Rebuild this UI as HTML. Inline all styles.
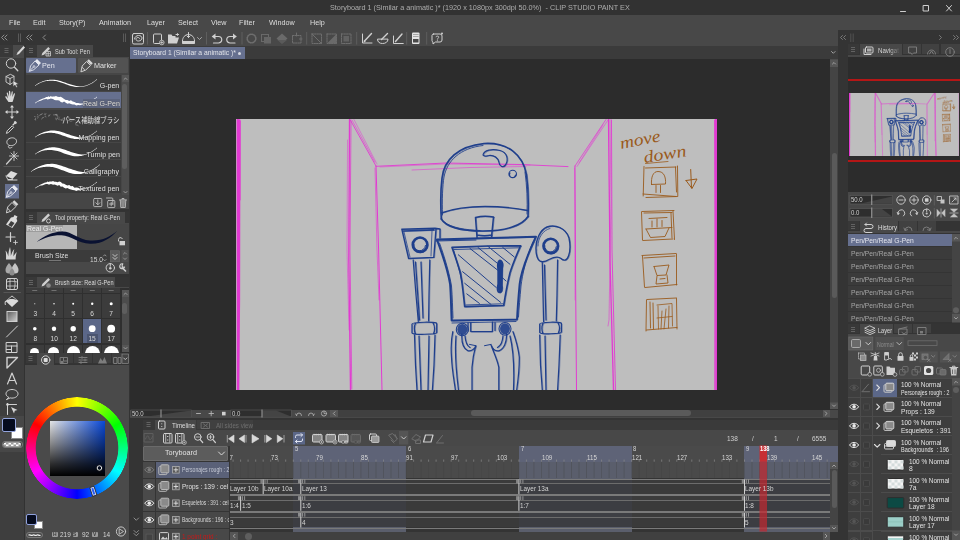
<!DOCTYPE html>
<html lang="en"><head><meta charset="utf-8"><title>Storyboard 1 (Similar a animatic ) - CLIP STUDIO PAINT EX</title>
<style>
html,body{margin:0;padding:0;}
body{width:960px;height:540px;overflow:hidden;position:relative;background:#333333;font-family:"Liberation Sans","Noto Sans CJK JP",sans-serif;}
div,span.t,svg{position:absolute;}
div{box-sizing:border-box;overflow:hidden;}
span.t{white-space:nowrap;transform-origin:0 50%;}
svg{overflow:visible;}
.ic{fill:none;stroke:#d0d0d0;stroke-width:1;stroke-linecap:round;stroke-linejoin:round;}
.icd{fill:none;stroke:#6e6e6e;stroke-width:1;stroke-linecap:round;stroke-linejoin:round;}
.bl{fill:none;stroke:#1f3f8c;stroke-width:1.1;stroke-linecap:round;stroke-linejoin:round;}
.mg{fill:none;stroke:#e23ad2;stroke-width:1;stroke-linecap:round;stroke-linejoin:round;}
.og{fill:none;stroke:#9a5a1c;stroke-width:1;stroke-linecap:round;stroke-linejoin:round;}
</style></head><body>
<div style="left:0px;top:0px;width:960px;height:15px;background:#323232;"></div>
<span class="t" style="left:330px;top:3px;font-size:7.5px;line-height:9.5px;color:#adadad;transform:scaleX(0.968);">Storyboard 1 (Similar a animatic )* (1920 x 1080px 300dpi 50.0%)&nbsp; - CLIP STUDIO PAINT EX</span>
<svg style="left:898px;top:2px;" width="60" height="11" viewBox="0 0 60 11"><path class="ic" style="stroke:#cfcfcf" d="M2.5 9.5h5 M25.5 3.5h5v5.5h-5z M48.5 3.5l5 5.5m0-5.5l-5 5.5"/></svg>
<div style="left:0px;top:15px;width:960px;height:15px;background:#484848;"></div>
<span class="t" style="left:9px;top:17.5px;font-size:8px;line-height:10px;color:#dedede;transform:scaleX(0.9);">File</span>
<span class="t" style="left:33.3px;top:17.5px;font-size:8px;line-height:10px;color:#dedede;transform:scaleX(0.9);">Edit</span>
<span class="t" style="left:58.7px;top:17.5px;font-size:8px;line-height:10px;color:#dedede;transform:scaleX(0.9);">Story(P)</span>
<span class="t" style="left:98.5px;top:17.5px;font-size:8px;line-height:10px;color:#dedede;transform:scaleX(0.9);">Animation</span>
<span class="t" style="left:146.5px;top:17.5px;font-size:8px;line-height:10px;color:#dedede;transform:scaleX(0.9);">Layer</span>
<span class="t" style="left:177.5px;top:17.5px;font-size:8px;line-height:10px;color:#dedede;transform:scaleX(0.9);">Select</span>
<span class="t" style="left:210.5px;top:17.5px;font-size:8px;line-height:10px;color:#dedede;transform:scaleX(0.9);">View</span>
<span class="t" style="left:239.3px;top:17.5px;font-size:8px;line-height:10px;color:#dedede;transform:scaleX(0.9);">Filter</span>
<span class="t" style="left:269px;top:17.5px;font-size:8px;line-height:10px;color:#dedede;transform:scaleX(0.9);">Window</span>
<span class="t" style="left:310px;top:17.5px;font-size:8px;line-height:10px;color:#dedede;transform:scaleX(0.9);">Help</span>
<div style="left:0px;top:30px;width:130px;height:15px;background:#343434;"></div>
<svg style="left:0px;top:30px;" width="130" height="15" viewBox="0 0 130 15"><path class="ic" style="stroke:#8e8e8e" d="M4 5l-2.5 2.5l2.5 2.5 M7 5l-2.5 2.5l2.5 2.5 M29 5l-2.5 2.5l2.5 2.5 M32 5l-2.5 2.5l2.5 2.5 M45.5 5l-2.5 2.5l2.5 2.5"/><path d="M18.5 3.5v8.5M20.5 3.5v8.5M123.5 3.5v8.5M125.5 3.5v8.5" stroke="#5a5a5a" stroke-width="1" fill="none"/></svg>
<div style="left:130px;top:30px;width:708px;height:16px;background:#484848;"></div>
<svg style="left:0px;top:0px;" width="960" height="60" viewBox="0 0 960 60"><rect class="ic" x="132.5" y="33.5" width="11" height="10.5" rx="1.5"/><path class="ic" d="M134.5 39c0-2 2-3.5 4-3.5s3.5 1 3.5 2.5s-1.5 3-3.5 3s-2.5-1-2.500-2s1-1.500 2-1.500s1.500.5 1.500 1"/><path d="M147.5 32v12.500" stroke="#5e5e5e" stroke-width="1" fill="none"/><path d="M206.5 32v12.500" stroke="#5e5e5e" stroke-width="1" fill="none"/><path d="M242 32v12.500" stroke="#5e5e5e" stroke-width="1" fill="none"/><path d="M306.7 32v12.500" stroke="#5e5e5e" stroke-width="1" fill="none"/><path d="M356.7 32v12.500" stroke="#5e5e5e" stroke-width="1" fill="none"/><path d="M406.7 32v12.500" stroke="#5e5e5e" stroke-width="1" fill="none"/><path d="M426.7 32v12.500" stroke="#5e5e5e" stroke-width="1" fill="none"/><path class="ic" d="M160 43.500h-5.500a1 1 0 0 1-1-1v-7.500a1 1 0 0 1 1-1h6a1 1 0 0 1 1 1v5"/><circle cx="161.800" cy="42.500" r="2.300" fill="#484848" stroke="#d0d0d0" stroke-width=".8"/><path class="ic" style="stroke-width:.8" d="M160.600 42.500h2.400M161.800 41.300v2.400"/><path d="M168 43.500v-9h3.500l1 1.500h3v1.500h3.500l-2 6z" fill="#d0d0d0"/><path class="ic" d="M176 34.500h2.500M177.500 33.500l1 1l-1 1"/><path d="M182.500 43.500v-2.500c0-3.500 2.500-6.500 6-6.500s6 3 6 6.500v2.500z" fill="none" stroke="#d0d0d0" stroke-width="1"/><path d="M182.500 41h12v2.500h-12z" fill="#d0d0d0"/><path class="ic" d="M188.500 32.500v5M187 36l1.500 1.500l1.500-1.500"/><path class="ic" style="stroke:#a8a8a8" d="M197.500 37.500l2 2l2-2"/><path class="ic" style="stroke-width:1.200" d="M214 36.500h4.500a3 3 0 0 1 0 6.500h-5"/><path d="M215.500 33.500v6l-3.800-3z" fill="#d0d0d0"/><path class="ic" style="stroke-width:1.200" d="M234.500 36.500h-4.500a3 3 0 0 0 0 6.500h5"/><path d="M233 33.500v6l3.800-3z" fill="#d0d0d0"/><circle class="icd" cx="251.500" cy="38.500" r="4.300" style="stroke-width:1.600" stroke-dasharray="1 1.250"/><rect class="icd" x="261.500" y="34.500" width="7" height="7" stroke-dasharray="1 1"/><rect x="264" y="37" width="7" height="6.500" fill="#666"/><path d="M282 33.500l5.500 5l-5.500 5l-5.500-5z" fill="#6a6a6a"/><path d="M277.500 40h9.500l-5 4z" fill="#5a5a5a"/><rect class="icd" x="292.500" y="35.500" width="8.500" height="7.500" stroke-dasharray="1.500 1"/><path class="icd" d="M296.500 33v3M302 39h-2.500"/><rect class="icd" x="312" y="34" width="9.500" height="9.500" stroke-dasharray="1.500 1"/><path class="icd" d="M312 34l9.500 9.500"/><rect class="icd" x="327" y="34" width="9.500" height="9.500" stroke-dasharray="1.500 1"/><path d="M336.500 34v9.500h-9.500z" fill="#6a6a6a"/><rect class="icd" x="341.500" y="34" width="9.500" height="9.500" stroke-dasharray="1.500 1"/><rect x="343.500" y="36" width="5.500" height="5.500" fill="#626262"/><path class="ic" d="M362.500 34v9h9.500"/><path class="ic" style="stroke-width:1.400" d="M364.500 41l7-7.500"/><path d="M363.500 42.500l.5-2.500l1.800 1.800z" fill="#d0d0d0"/><path class="ic" d="M377.500 39.500c0 2.500 2 4 5 4s5.500-1.500 5.500-4z"/><path class="ic" style="stroke-width:1.400" d="M381.500 39.500l6-6"/><path class="ic" d="M393.500 36v7.500h9.500"/><path class="ic" style="stroke-width:1.400" d="M395.500 41.500l6.500-7.500"/><path class="ic" d="M395 43.500h8"/><rect x="412" y="32.500" width="7.500" height="11.500" rx="1" fill="#e4e4e4"/><rect x="413" y="39" width="5.500" height="3.500" fill="#484848"/><path d="M413.500 34.500h1M415.500 34.500h1M417.500 34.500h.8M413.500 36.500h1M415.500 36.500h1M417.500 36.500h.8" stroke="#484848" stroke-width=".8"/><path class="ic" d="M433.500 34h6.500a2 2 0 0 1 2 2v4a2 2 0 0 1-2 2h-4.500l-2.500 2v-2a1.500 1.500 0 0 1-1-1.500v-5a1.500 1.500 0 0 1 1.500-1.500z"/><path class="ic" style="stroke-width:.9" d="M436 36.800c0-1 2.800-1 2.800.3c0 .9-1.400 1-1.400 2.100M437.400 40.600v.2"/><circle cx="442" cy="33.500" r="1" fill="#d0d0d0"/></svg>
<div style="left:130px;top:46px;width:708px;height:13px;background:#3b3b3b;"></div>
<div style="left:130px;top:47px;width:115px;height:12px;background:#66708f;"></div>
<span class="t" style="left:133px;top:48px;font-size:7.5px;line-height:9.5px;color:#e2e4ea;transform:scaleX(0.9);">Storyboard 1 (Similar a animatic )*</span>
<div style="left:237.5px;top:51.5px;width:3px;height:3px;background:#d5d8e2;border-radius:2px;"></div>
<svg style="left:828px;top:48px;" width="10" height="10" viewBox="0 0 10 10"><path class="ic" style="stroke:#a0a0a0" d="M3.500 3.500l1.800 1.800l1.800-1.800"/></svg>
<div style="left:0px;top:45px;width:24px;height:495px;background:#3e3e3e;"></div>
<div style="left:24px;top:45px;width:1.5px;height:495px;background:#323232;"></div>
<div style="left:0px;top:45px;width:13px;height:11.5px;background:#383838;"></div>
<div style="left:13px;top:45px;width:11px;height:12.5px;background:#4a4a4a;"></div>
<div style="left:0px;top:56.5px;width:24px;height:1px;background:#4a4a4a;"></div>
<svg style="left:0px;top:0px;" width="26" height="420" viewBox="0 0 26 420"><path d="M4.500 48.500h4M4.500 50.500h4M4.500 52.500h4" stroke="#626262" stroke-width="1" fill="none"/><path d="M16.500 55l1-2.500l6-6.500l1.500 1.500l-6 6.500z" fill="#d8d8d8"/><g transform="translate(12 65)"><circle class="ic" cx="-1" cy="-1.500" r="4.700"/><path class="ic" style="stroke-width:1.300" d="M2.500 2.200l3.300 3.600"/></g><g transform="translate(12 80.5)"><path class="ic" style="stroke-width:.9" d="M-2 -6l-4 2v5.500l4 2.500l4-2.500v-5.500z M-6 -4l4 2l4-2 M-2 -2v6"/><path d="M1 0l5.500 3.500l-2.300.4l1.300 2.600l-1.200.6l-1.300-2.600l-1.800 1.500z" fill="#e0e0e0" stroke="#3e3e3e" stroke-width=".5"/></g><g transform="translate(12 96.5)"><path d="M-3.500 5.500c-1.500-2-2.500-3.500-3.200-5c-.3-.8.700-1.200 1.300-.4l1.400 1.800l-1.300-5.200c-.2-.9.900-1.100 1.200-.3l1.200 3.800l-.2-5.200c0-.9 1.200-.9 1.300 0l.5 5l.9-4.600c.2-.9 1.300-.7 1.200.2l-.5 4.900l1.500-3.200c.4-.8 1.400-.4 1.100.5c-.8 2.500-1.200 5-2.400 7.700z" fill="#d6d6d6"/></g><g transform="translate(12 112)"><path class="ic" d="M0 -5.500v11M-5.500 0h11"/><path d="M0 -7l2 2.500h-4zM0 7l2-2.500h-4zM-7 0l2.500-2v4zM7 0l-2.500-2v4z" fill="#d6d6d6"/></g><g transform="translate(12 127.5)"><path class="ic" d="M-5.500 5.500l.7-2.200l5-5l1.500 1.500l-5 5z"/><path d="M.2-2.700l2-2l-.6-.6l1.200-1.200c.6-.6 2.700 1.500 2.100 2.100l-1.200 1.200l-.6-.6l-2 2z" fill="#d6d6d6"/></g><g transform="translate(12 143)"><path class="ic" d="M-2.500 2.500c-3.500-1-3.500-5-.5-6.800c3-1.800 7-.7 7.500 2c.5 3-3 5.300-6 4.800c-2-.3-2.800 1.500-1.500 2.300c1 .6 2 0 3-.5"/></g><g transform="translate(12 158)"><path class="ic" style="stroke-width:1.200" d="M-5.500 6l5-5.500"/><path class="ic" style="stroke-width:.9" d="M2 -6.500v9M-2.500-2h9M-1-5l6 6M5-5l-6 6"/></g><path d="M3.500 166.500h17.500" stroke="#565656" stroke-width="1" fill="none"/><g transform="translate(12 175.5)"><path d="M-6 .5l5-5l6.500 2.500l-5 5.500z" fill="#dcdcdc"/><path class="ic" d="M-6 .5l1.800 3.500l4.700 0M-4 4.500h9"/></g><rect x="5" y="184" width="14" height="14.500" fill="#66708f"/><g transform="translate(12 191.5)"><path class="ic" style="stroke:#e6e8f0" d="M-5.500 5.500l1-5l4.500-5l4 4l-5 4.500z M-5.500 5.500l4-4"/><path d="M0-4.500l2-2l4 4l-2 2z" fill="#e6e8f0"/><circle cx="-1" cy="1" r=".9" fill="none" stroke="#e6e8f0" stroke-width=".7"/></g><g transform="translate(12 206.5)"><path class="ic" d="M-5.500 6l1.200-5.500l4.300-4.500l4 4l-4.500 4.300z M-4.200 2l2.300 2.300"/><path d="M.5-4.500l1.800-1.800l4 4l-1.800 1.800z" fill="#d6d6d6"/></g><g transform="translate(12 222)"><path d="M-6 2.500l5-7l2.500-.5l1-2l3 1.500l-1 2l.8 2.500l-5 7z" fill="#dcdcdc"/><path d="M-3.800 3l2.800-4l3.500 2l-2.800 4z" fill="#3e3e3e"/></g><g transform="translate(12 238.5)"><path class="ic" style="stroke-width:1.200" d="M-1.500 -6v9M-6-1.500h9"/><path class="ic" style="stroke-width:.9" d="M3.500 2v3.800M1.600 3.900h3.800"/></g><g transform="translate(12 253.5)"><path d="M-6 6c0-3 .3-6-.5-9c1.800 2 2.300 4 2.800 6c.2-3.500.5-6.500 1.700-9.500c.8 3 .8 6 .8 9c.8-2.500 1.700-5 3.500-7c-.8 3-.8 5-.8 7.500c.8-1.800 1.700-3 3.300-4.500c-.8 2.500-1.200 5-1.200 7.500z" fill="#d6d6d6"/></g><g transform="translate(12 269)"><path d="M-3-6c2 2.500 3.500 4.500 3.500 7a3.500 3.500 0 0 1-7 0c0-2.500 1.500-4.500 3.500-7z" fill="#a8a8a8"/><path d="M3-6c2 2.500 3.500 4.500 3.500 7a3.500 3.500 0 0 1-7 0c0-2.500 1.500-4.500 3.500-7z" fill="#c4c4c4"/><path d="M0 -1c1.500 1.800 2.500 3.300 2.500 5a2.500 2.500 0 0 1-5 0c0-1.700 1-3.200 2.500-5z" fill="#8c8c8c"/></g><g transform="translate(12 284)"><rect class="ic" x="-5.500" y="-5.500" width="11" height="11" rx="1.500"/><path class="ic" style="stroke-width:.8" d="M-2-5.500v11M2-5.500c1.500 3.500 1.500 7 0 11M-5.500-2c3.500-1 7-1 11 0M-5.500 2h11"/></g><path d="M3.500 292.500h17.500" stroke="#565656" stroke-width="1" fill="none"/><g transform="translate(12 301.5)"><path d="M0-6l6.500 5.500l-6.500 6l-6.500-6z" fill="#dcdcdc"/><path d="M-4.800-1.500c2-1.500 7-1.500 9.500 0l-4.700 -3.500z" fill="#3e3e3e"/><path d="M-6.500-.5c-.5 1.500-.5 3 0 4" stroke="#dcdcdc" stroke-width="1" fill="none"/></g><defs><linearGradient id="tg" x1="0" y1="0" x2="1" y2="1"><stop offset="0" stop-color="#5a5a5a"/><stop offset="1" stop-color="#d0d0d0"/></linearGradient></defs><g transform="translate(12 316.5)"><rect x="-5" y="-5" width="10" height="10" fill="url(#tg)" stroke="#cfcfcf" stroke-width="1"/></g><g transform="translate(12 331.5)"><path class="ic" d="M-5.500 5.500l11-11"/></g><g transform="translate(12 347.5)"><rect class="ic" x="-5.500" y="-5" width="10.500" height="10"/><path class="ic" d="M-5.500-1.500h10.500M-.5-1.500v6.500M-5.500 2h5"/></g><g transform="translate(12 363)"><path class="ic" style="stroke-width:1.400" d="M-5 -5.500h10.500l-10.500 10.500z"/></g><g transform="translate(12 379)"><path class="ic" style="stroke-width:1.200" d="M-4.500 5l4.500-11l4.500 11M-3 1.500h6"/></g><g transform="translate(12 394)"><path class="ic" d="M-3.500 3.200c-1.800-.8-2.500-2-2.500-3.400c0-2.500 2.700-4.300 6-4.300s6 1.800 6 4.300s-2.700 4.300-6 4.300c-.6 0-1.200 0-1.800-.2l-3.500 1.600z"/></g><g transform="translate(12 409)"><path class="ic" d="M-4.500-5.500v11M-4.500-4.500h9"/><circle cx="-4.500" cy="-4.500" r="1.300" fill="#d6d6d6"/><path d="M-1-2l6.500 3l-2.700.8l-.8 2.700z" fill="#d6d6d6"/></g></svg>
<div style="left:0px;top:416px;width:24px;height:36px;background:#474747;"></div>
<div style="left:11px;top:427px;width:11.5px;height:11.5px;background:#ffffff;border:1px solid #8a8a8a;"></div>
<div style="left:1.5px;top:418px;width:14px;height:14px;background:#050b1e;border:1px solid #93a4dc;border-radius:2px;"></div>
<div style="left:2px;top:441px;width:20.5px;height:7px;background:#474747;border:1px solid #777;border-radius:3px;"></div>
<svg style="left:0px;top:0px;" width="26" height="460" viewBox="0 0 26 460"><rect x="3.500" y="442.500" width="17.500" height="4" rx="2" fill="#fff"/><path d="M6 442.500h2.500v2h-2.500zM11 442.500h2.500v2h-2.500zM16 442.500h2.500v2h-2.500zM3.500 444.500h2.500v2h-2.500zM8.500 444.500h2.500v2h-2.500zM13.500 444.500h2.500v2h-2.500zM18.500 444.500h2.500v2h-2.500z" fill="#9a9a9a"/></svg>
<div style="left:25.5px;top:45px;width:103.0px;height:11.5px;background:#343434;"></div>
<div style="left:25.5px;top:45px;width:11.5px;height:10.5px;background:#383838;"></div>
<div style="left:37px;top:45px;width:55.7px;height:12.5px;background:#484848;"></div>
<div style="left:25.5px;top:56.5px;width:103.0px;height:1px;background:#484848;"></div>
<svg style="left:25.5px;top:45px;" width="12" height="12" viewBox="0 0 12 12"><path d="M3 3.500h4M3 5.500h4M3 7.500h4" stroke="#626262" stroke-width="1" fill="none"/></svg>
<span class="t" style="left:54.8px;top:46.7px;font-size:7px;line-height:9px;color:#dcdcdc;transform:scaleX(0.8);">Sub Tool: Pen</span>
<svg style="left:37px;top:45px;" width="18" height="12" viewBox="0 0 18 12"><path d="M4.500 10.500l.8-2.500l6-6l1.700 1.700l-6 6z" fill="#cfcfcf"/><path d="M9 6.500h4.500v4.500h-4.500zM9 8.700h4.500M11.200 6.500v4.500" stroke="#cfcfcf" stroke-width=".8" fill="#484848"/></svg>
<div style="left:25.5px;top:57.5px;width:103.0px;height:151px;background:#464646;"></div>
<div style="left:26px;top:58.2px;width:50px;height:14.5px;background:#66708f;border-radius:1px;"></div>
<div style="left:77.7px;top:58.2px;width:50px;height:14.5px;background:#525252;border-radius:1px;"></div>
<svg style="left:26px;top:58px;" width="110" height="16" viewBox="0 0 110 16"><g transform="translate(9 7.500)"><path class="ic" style="stroke:#e6e8f0;stroke-width:.9" d="M-5.500 5.500l1-5l4.500-5l4 4l-5 4.500z M-5.500 5.500l4-4"/><path d="M0-4.500l2-2l4 4l-2 2z" fill="#e6e8f0"/><circle cx="-1" cy="1" r=".9" fill="none" stroke="#e6e8f0" stroke-width=".7"/></g><g transform="translate(60.500 7.500)"><path class="ic" d="M-5.500 6l1.200-5.500l4.300-4.500l4 4l-4.500 4.300z M-4.200 2l2.300 2.300"/><path d="M.5-4.500l1.800-1.800l4 4l-1.800 1.800z" fill="#d6d6d6"/></g></svg>
<span class="t" style="left:41.5px;top:60.5px;font-size:8px;line-height:10px;color:#e4e6ee;transform:scaleX(0.9);">Pen</span>
<span class="t" style="left:93.5px;top:60.5px;font-size:8px;line-height:10px;color:#e0e0e0;transform:scaleX(0.9);">Marker</span>
<div style="left:25.5px;top:74.8px;width:95px;height:16px;background:#3b3b3b;"></div>
<div style="left:25.5px;top:92.3px;width:95px;height:16px;background:#66708f;"></div>
<div style="left:25.5px;top:109.5px;width:95px;height:16px;background:#3b3b3b;"></div>
<div style="left:25.5px;top:126.3px;width:95px;height:16px;background:#3b3b3b;"></div>
<div style="left:25.5px;top:143.3px;width:95px;height:16px;background:#3b3b3b;"></div>
<div style="left:25.5px;top:160.4px;width:95px;height:16px;background:#3b3b3b;"></div>
<div style="left:25.5px;top:177.4px;width:95px;height:16px;background:#3b3b3b;"></div>
<svg style="left:0px;top:0px;" width="130" height="200" viewBox="0 0 130 200"><path d="M35.0 85.4L36.1 84.7L37.2 83.9L38.4 83.3L39.5 82.7L40.6 82.2L41.8 81.7L42.9 81.3L44.0 81.0L45.1 80.6L46.2 80.4L47.4 80.1L48.5 80.0L49.6 79.8L50.8 79.7L51.9 79.7L53.0 79.7L54.5 79.8L56.0 80.0L57.6 80.3L59.2 80.7L60.8 81.1L62.4 81.7L64.1 82.2L65.8 82.8L67.4 83.4L69.2 84.0L70.9 84.6L72.7 85.1L74.5 85.5L76.3 85.9L78.1 86.2L80.0 86.4L81.3 86.4L82.6 86.3L83.8 86.0L85.0 85.8L86.2 85.4L87.4 85.0L88.5 84.6L89.6 84.0L90.7 83.5L91.7 82.9L92.7 82.3L93.6 81.7L94.5 81.1L95.4 80.4L96.2 79.8L97.0 79.1L97.0 79.7L96.2 80.3L95.4 81.0L94.5 81.6L93.6 82.2L92.7 82.9L91.7 83.5L90.7 84.1L89.6 84.6L88.5 85.1L87.4 85.6L86.2 86.0L85.0 86.3L83.8 86.6L82.6 86.8L81.3 86.9L80.0 87.0L78.1 87.0L76.3 86.9L74.5 86.7L72.7 86.3L70.9 85.9L69.2 85.4L67.4 84.8L65.8 84.2L64.1 83.6L62.4 83.0L60.8 82.5L59.2 81.9L57.6 81.5L56.0 81.1L54.5 80.9L53.0 80.7L51.9 80.7L50.8 80.7L49.6 80.7L48.5 80.8L47.4 80.9L46.2 81.1L45.1 81.3L44.0 81.5L42.9 81.9L41.8 82.3L40.6 82.8L39.5 83.3L38.4 83.9L37.2 84.5L36.1 85.2L35.0 86.0z" fill="#ffffff"/><path d="M35.0 103.0L36.1 102.1L37.2 101.5L38.4 100.8L39.5 99.9L40.6 99.6L41.8 99.1L42.9 98.4L44.0 98.2L45.1 97.7L46.2 96.9L47.4 97.0L48.5 96.3L49.6 96.9L50.8 96.0L51.9 96.8L53.0 96.5L54.5 96.6L56.0 96.0L57.6 96.8L59.2 97.1L60.8 96.8L62.4 97.7L64.1 99.0L65.8 99.9L67.4 100.1L69.2 100.9L70.9 100.2L72.7 101.6L74.5 102.1L76.3 103.0L78.1 102.9L80.0 103.4L81.3 103.4L82.6 103.6L83.8 103.4L85.0 103.1L86.2 102.8L87.4 102.4L88.5 102.0L89.6 101.6L90.7 100.9L91.7 100.3L92.7 99.9L93.6 99.1L94.5 98.5L95.4 97.9L96.2 97.3L97.0 96.5L97.0 97.2L96.2 97.9L95.4 98.5L94.5 99.2L93.6 99.7L92.7 100.3L91.7 100.9L90.7 101.7L89.6 102.0L88.5 102.6L87.4 103.0L86.2 103.4L85.0 103.7L83.8 104.2L82.6 104.5L81.3 104.7L80.0 105.3L78.1 105.1L76.3 105.4L74.5 104.6L72.7 104.4L70.9 103.9L69.2 103.3L67.4 103.7L65.8 102.7L64.1 101.6L62.4 102.6L60.8 101.9L59.2 100.4L57.6 100.2L56.0 100.3L54.5 100.0L53.0 98.9L51.9 98.7L50.8 98.5L49.6 99.1L48.5 99.2L47.4 99.4L46.2 98.8L45.1 99.3L44.0 99.3L42.9 99.7L41.8 100.3L40.6 100.7L39.5 101.1L38.4 101.5L37.2 102.1L36.1 102.8L35.0 103.4z" fill="#ffffff"/><path d="M55.0 114.4l1.9 0.4M69.4 119.6l-0.0 0.6M35.5 116.6l0.6 0.2M61.9 119.6l0.6 0.5M75.7 124.0l0.6 1.7M99.4 116.2l1.5 1.9M42.8 113.5l-1.0 0.6M45.3 115.6l0.7 1.8M70.2 118.4l0.5 0.4M79.3 121.8l-0.3 1.1M63.8 117.6l-1.3 1.8M49.6 115.7l-1.5 0.6M82.6 121.1l2.5 1.0M61.4 119.1l0.0 0.8M35.7 117.7l-0.5 2.1M92.5 119.6l-0.6 1.9M72.4 120.9l-2.3 0.4M65.2 119.9l-0.4 0.5M77.0 124.4l1.4 1.8M59.2 118.0l0.1 0.5M44.4 113.4l-0.5 0.4M41.8 114.3l-1.2 0.5M38.5 115.9l-1.6 0.6M88.7 123.3l0.3 1.1M57.4 118.6l2.3 1.2M45.0 113.9l0.0 1.0M73.1 120.1l0.1 0.5M58.1 117.2l-1.5 2.1M68.1 120.5l2.0 0.3M94.2 121.5l-1.9 1.4M59.7 116.8l-0.3 0.7M37.2 114.3l0.8 0.5M56.1 114.1l0.4 0.2M39.9 115.2l-0.5 0.2M74.8 119.8l0.5 0.9M57.8 114.9l-2.4 0.1M64.7 118.8l0.7 0.2M56.3 115.2l2.0 1.1M34.6 119.5l1.5 0.7M69.9 118.1l-1.7 0.1M91.7 121.7l0.4 1.0M44.4 116.7l-1.3 1.1M55.4 114.8l-2.3 0.1M91.0 122.5l-1.6 1.7M48.4 115.3l1.3 0.1M34.9 116.0l-0.6 0.9M98.0 118.6l-2.6 0.1M97.9 118.2l0.7 0.6M46.4 113.7l-1.8 0.6M90.1 121.0l-1.6 1.1M38.8 116.9l-1.9 1.6M84.0 122.0l-0.7 0.5M55.6 117.7l0.8 2.5M60.3 119.7l1.8 1.1M41.6 113.9l-2.0 1.4M42.9 117.1l-1.3 2.3M56.8 116.8l0.8 0.0M99.0 119.3l-1.6 0.3M62.5 120.0l1.8 1.4M50.1 114.3l-0.3 1.0" stroke="#c8c8c8" stroke-width=".5" fill="none" opacity=".75"/><path d="M35.0 136.9L36.1 136.2L37.2 135.4L38.4 134.8L39.5 134.1L40.6 133.5L41.8 133.0L42.9 132.5L44.0 132.1L45.1 131.7L46.2 131.4L47.4 131.2L48.5 130.9L49.6 130.8L50.8 130.6L51.9 130.5L53.0 130.5L54.5 130.5L56.0 130.7L57.6 131.0L59.2 131.3L60.8 131.8L62.4 132.3L64.1 132.8L65.8 133.4L67.4 134.0L69.2 134.6L70.9 135.2L72.7 135.8L74.5 136.3L76.3 136.8L78.1 137.2L80.0 137.4L81.3 137.5L82.6 137.6L83.8 137.5L85.0 137.3L86.2 136.9L87.4 136.5L88.5 136.1L89.6 135.5L90.7 135.0L91.7 134.4L92.7 133.8L93.6 133.2L94.5 132.6L95.4 131.9L96.2 131.3L97.0 130.6L97.0 131.2L96.2 131.8L95.4 132.5L94.5 133.1L93.6 133.8L92.7 134.4L91.7 135.0L90.7 135.6L89.6 136.1L88.5 136.6L87.4 137.1L86.2 137.5L85.0 137.8L83.8 138.1L82.6 138.5L81.3 138.8L80.0 139.0L78.1 139.1L76.3 139.1L74.5 138.9L72.7 138.6L70.9 138.3L69.2 137.8L67.4 137.2L65.8 136.6L64.1 136.0L62.4 135.4L60.8 134.8L59.2 134.3L57.6 133.8L56.0 133.4L54.5 133.1L53.0 132.9L51.9 132.8L50.8 132.8L49.6 132.8L48.5 132.8L47.4 132.9L46.2 133.0L45.1 133.2L44.0 133.4L42.9 133.7L41.8 134.0L40.6 134.4L39.5 134.9L38.4 135.4L37.2 136.0L36.1 136.7L35.0 137.5z" fill="#ffffff"/><path d="M35.0 153.9L36.1 153.2L37.2 152.4L38.4 151.7L39.5 151.0L40.6 150.4L41.8 149.9L42.9 149.4L44.0 149.0L45.1 148.6L46.2 148.2L47.4 148.0L48.5 147.7L49.6 147.5L50.8 147.4L51.9 147.3L53.0 147.2L54.5 147.3L56.0 147.4L57.6 147.7L59.2 148.0L60.8 148.5L62.4 149.0L64.1 149.5L65.8 150.1L67.4 150.7L69.2 151.3L70.9 151.9L72.7 152.5L74.5 153.0L76.3 153.5L78.1 154.0L80.0 154.3L81.3 154.4L82.6 154.5L83.8 154.4L85.0 154.2L86.2 153.9L87.4 153.5L88.5 153.1L89.6 152.6L90.7 152.0L91.7 151.4L92.7 150.8L93.6 150.2L94.5 149.6L95.4 148.9L96.2 148.3L97.0 147.6L97.0 148.2L96.2 148.8L95.4 149.5L94.5 150.1L93.6 150.8L92.7 151.4L91.7 152.0L90.7 152.6L89.6 153.1L88.5 153.6L87.4 154.1L86.2 154.5L85.0 154.8L83.8 155.2L82.6 155.6L81.3 155.9L80.0 156.1L78.1 156.3L76.3 156.3L74.5 156.2L72.7 155.9L70.9 155.6L69.2 155.1L67.4 154.6L65.8 154.0L64.1 153.4L62.4 152.7L60.8 152.1L59.2 151.6L57.6 151.1L56.0 150.7L54.5 150.4L53.0 150.2L51.9 150.1L50.8 150.0L49.6 150.0L48.5 150.0L47.4 150.1L46.2 150.2L45.1 150.3L44.0 150.6L42.9 150.8L41.8 151.1L40.6 151.5L39.5 152.0L38.4 152.5L37.2 153.1L36.1 153.7L35.0 154.5z" fill="#ffffff"/><path d="M31.0 171.4L32.3 170.5L33.5 169.6L34.8 168.8L36.0 168.1L37.3 167.4L38.5 166.8L39.8 166.2L41.0 165.7L42.3 165.3L43.5 164.9L44.8 164.6L46.0 164.3L47.3 164.1L48.5 164.0L49.8 163.9L51.0 163.8L52.7 163.8L54.4 164.0L56.2 164.3L57.9 164.7L59.7 165.2L61.5 165.8L63.4 166.4L65.2 167.1L67.1 167.7L69.0 168.4L71.0 169.1L72.9 169.7L74.9 170.3L77.0 170.9L79.0 171.4L81.1 171.8L82.5 171.9L83.9 172.0L85.3 172.0L86.7 171.7L88.0 171.4L89.3 170.9L90.6 170.4L91.8 169.8L93.0 169.2L94.1 168.5L95.2 167.8L96.3 167.1L97.3 166.4L98.2 165.7L99.1 164.9L100.0 164.2L100.0 164.7L99.1 165.5L98.2 166.2L97.3 166.9L96.3 167.7L95.2 168.4L94.1 169.1L93.0 169.8L91.8 170.4L90.6 171.0L89.3 171.5L88.0 172.0L86.7 172.4L85.3 172.8L83.9 173.3L82.5 173.6L81.1 173.9L79.0 174.1L77.0 174.1L74.9 174.0L72.9 173.7L71.0 173.2L69.0 172.7L67.1 172.0L65.2 171.3L63.4 170.6L61.5 169.9L59.7 169.2L57.9 168.6L56.2 168.0L54.4 167.5L52.7 167.1L51.0 166.9L49.8 166.8L48.5 166.8L47.3 166.7L46.0 166.8L44.8 166.9L43.5 167.0L42.3 167.2L41.0 167.4L39.8 167.8L38.5 168.1L37.3 168.6L36.0 169.1L34.8 169.7L33.5 170.3L32.3 171.1L31.0 172.0z" fill="#ffffff"/><path d="M35.0 188.0L36.1 187.2L37.2 186.4L38.4 185.9L39.5 185.3L40.6 184.5L41.8 184.1L42.9 183.6L44.0 183.1L45.1 182.4L46.2 182.6L47.4 181.6L48.5 182.1L49.6 181.6L50.8 181.6L51.9 181.4L53.0 180.9L54.5 181.8L56.0 181.8L57.6 182.2L59.2 181.4L60.8 182.1L62.4 183.4L64.1 183.7L65.8 184.8L67.4 185.5L69.2 184.9L70.9 186.2L72.7 186.0L74.5 187.7L76.3 187.6L78.1 187.8L80.0 188.8L81.3 188.3L82.6 188.3L83.8 188.4L85.0 188.4L86.2 188.1L87.4 187.5L88.5 187.1L89.6 186.7L90.7 186.2L91.7 185.5L92.7 184.9L93.6 184.2L94.5 183.7L95.4 182.9L96.2 182.3L97.0 181.8L97.0 182.2L96.2 183.0L95.4 183.5L94.5 184.1L93.6 184.9L92.7 185.4L91.7 186.0L90.7 186.6L89.6 187.2L88.5 187.7L87.4 188.2L86.2 188.6L85.0 189.0L83.8 189.4L82.6 189.7L81.3 189.8L80.0 190.4L78.1 190.2L76.3 190.9L74.5 190.3L72.7 190.1L70.9 189.5L69.2 188.9L67.4 187.9L65.8 188.5L64.1 187.8L62.4 186.5L60.8 186.7L59.2 184.9L57.6 185.8L56.0 185.0L54.5 184.6L53.0 184.7L51.9 184.2L50.8 184.0L49.6 184.5L48.5 184.5L47.4 184.0L46.2 183.9L45.1 184.3L44.0 184.8L42.9 185.2L41.8 185.4L40.6 185.5L39.5 186.1L38.4 186.6L37.2 187.2L36.1 187.8L35.0 188.6z" fill="#ffffff"/></svg>
<span class="t" style="right:840.5px;top:81.1px;font-size:8px;line-height:10px;color:#e2e2e2;transform:scaleX(0.88);transform-origin:100% 50%;text-shadow:0 0 1px #333;">G-pen</span>
<div style="left:82.7px;top:99.0px;width:37px;height:9px;background:#5c647d;"></div>
<span class="t" style="right:840.5px;top:98.6px;font-size:8px;line-height:10px;color:#e2e2e2;transform:scaleX(0.88);transform-origin:100% 50%;text-shadow:0 0 1px #333;">Real G-Pen</span>
<span class="t" style="right:840.5px;top:115.8px;font-size:8px;line-height:10px;color:#e2e2e2;transform:scaleX(0.8);transform-origin:100% 50%;text-shadow:0 0 1px #333;">パース補助線ブラシ</span>
<span class="t" style="right:840.5px;top:132.6px;font-size:8px;line-height:10px;color:#e2e2e2;transform:scaleX(0.88);transform-origin:100% 50%;text-shadow:0 0 1px #333;">Mapping pen</span>
<span class="t" style="right:840.5px;top:149.60000000000002px;font-size:8px;line-height:10px;color:#e2e2e2;transform:scaleX(0.88);transform-origin:100% 50%;text-shadow:0 0 1px #333;">Turnip pen</span>
<span class="t" style="right:840.5px;top:166.70000000000002px;font-size:8px;line-height:10px;color:#e2e2e2;transform:scaleX(0.88);transform-origin:100% 50%;text-shadow:0 0 1px #333;">Calligraphy</span>
<span class="t" style="right:840.5px;top:183.70000000000002px;font-size:8px;line-height:10px;color:#e2e2e2;transform:scaleX(0.88);transform-origin:100% 50%;text-shadow:0 0 1px #333;">Textured pen</span>
<div style="left:121.5px;top:74.8px;width:7px;height:120.5px;background:#4c4c4c;"></div>
<div style="left:122.3px;top:84px;width:5px;height:85px;background:#5e5e5e;border-radius:2.500px;"></div>
<svg style="left:121.5px;top:74.8px;" width="7" height="121" viewBox="0 0 7 121"><rect x="0" y="0" width="7" height="7" fill="#565656"/><path class="ic" style="stroke:#a0a0a0;stroke-width:.9" d="M2 4.500l1.500-1.500l1.500 1.500M2 116.500l1.500 1.500l1.500-1.500"/></svg>
<svg style="left:90px;top:195px;" width="40" height="14" viewBox="0 0 40 14"><path class="ic" style="stroke:#bdbdbd;stroke-width:.9" d="M4.500 3.500h6.500a.8.800 0 0 1 .8.800v6.500a.8.800 0 0 1-.8.800h-6.500a.8.800 0 0 1-.8-.8v-6.500a.8.800 0 0 1 .8-.8zM7.800 5v4.500M5.800 7.800l2 2l2-2 M16.500 3h5.500a.8.800 0 0 1 .8.800v5.500M18.500 5.500h5.500a.8.800 0 0 1 .8.800v5.500a.8.800 0 0 1-.8.800h-5.500a.8.800 0 0 1-.8-.8v-5.500a.8.800 0 0 1 .8-.8zM19.500 9h3.500M21.200 7.300v3.500 M29.500 5h7M32 5v-1.500h2v1.500 M30.300 5l.5 7.500h4.500l.5-7.500"/><path d="M31 6h4l-.4 6h-3.200z" fill="#8a8a8a"/></svg>
<div style="left:25.5px;top:208.5px;width:103.0px;height:2.5px;background:#323232;"></div>
<div style="left:25.5px;top:211.5px;width:103.0px;height:11px;background:#343434;"></div>
<div style="left:25.5px;top:211.5px;width:11.5px;height:10px;background:#383838;"></div>
<div style="left:37px;top:211.5px;width:87.8px;height:12px;background:#484848;"></div>
<div style="left:25.5px;top:222.5px;width:103.0px;height:1px;background:#484848;"></div>
<svg style="left:25.5px;top:211.5px;" width="12" height="12" viewBox="0 0 12 12"><path d="M3 3.500h4M3 5.500h4M3 7.500h4" stroke="#626262" stroke-width="1" fill="none"/></svg>
<span class="t" style="left:54.8px;top:213.2px;font-size:7px;line-height:9px;color:#dcdcdc;transform:scaleX(0.8);">Tool property: Real G-Pen</span>
<svg style="left:37px;top:211.5px;" width="18" height="12" viewBox="0 0 18 12"><path d="M4.500 10l.8-2.500l6-6l1.700 1.700l-6 6z" fill="#cfcfcf"/><circle cx="11.500" cy="9" r="2" fill="#484848" stroke="#cfcfcf" stroke-width=".9"/></svg>
<div style="left:25.5px;top:223.5px;width:103.0px;height:50px;background:#464646;"></div>
<div style="left:25.5px;top:224.7px;width:51.5px;height:24px;background:#b6b6b6;"></div>
<div style="left:25.5px;top:224.7px;width:37.2px;height:7.8px;background:#9c9c9c;"></div>
<span class="t" style="left:27px;top:224px;font-size:8px;line-height:10px;color:#ececec;transform:scaleX(0.86);">Real G-Pen</span>
<svg style="left:0px;top:0px;" width="130" height="260" viewBox="0 0 130 260"><path d="M36.500 242c8-6 16-10.200 25.500-10.500c10-.3 16 8.200 28 9c12 .8 20-3.700 27.500-9.700c-7 7.200-15 13.500-27.500 13c-12.500-.5-18.500-8.300-28.500-8.600c-9-.3-16.500 2.300-25 6.800z" fill="#0a1232"/><path class="ic" style="stroke:#c8c8c8" d="M118.500 241v-1.500a2 2 0 0 1 3.800-.8"/><rect x="119.500" y="241" width="5.500" height="4.300" fill="#d0d0d0"/></svg>
<div style="left:25.5px;top:249.7px;width:84px;height:12.2px;background:#3b3b3b;"></div>
<span class="t" style="left:34.8px;top:251.2px;font-size:8px;line-height:10px;color:#dedede;transform:scaleX(0.86);">Brush Size</span>
<div style="left:48.7px;top:260px;width:12.3px;height:1px;background:#777;"></div>
<span class="t" style="left:90.3px;top:254.5px;font-size:7.5px;line-height:9.5px;color:#d8d8d8;transform:scaleX(0.88);">15.0</span>
<svg style="left:100px;top:250px;" width="30" height="12" viewBox="0 0 30 12"><path class="ic" style="stroke:#a8a8a8;stroke-width:.8" d="M3.500 6l1.300-1.300l1.300 1.300M3.500 9.500l1.300 1.300l1.300-1.300"/><rect x="10.500" y=".8" width="9" height="11" fill="#5a5a5a" stroke="#6c6c6c" stroke-width=".6"/><path class="ic" style="stroke:#d0d0d0;stroke-width:.9" d="M13 4.500l2 2l2-2M13 7.500l2 2l2-2"/><rect x="21.500" y="0" width="7" height="12" fill="#505050"/><path class="ic" style="stroke:#a0a0a0;stroke-width:.8" d="M23.500 4l1.500-1.500l1.500 1.500M23.500 8l1.500 1.500l1.500-1.500"/></svg>
<div style="left:25.5px;top:262px;width:103.0px;height:11.5px;background:#484848;"></div>
<svg style="left:100px;top:262px;" width="30" height="12" viewBox="0 0 30 12"><circle class="ic" cx="10.300" cy="5.800" r="4.200"/><path class="ic" d="M10.300 1.500v2.800"/><circle cx="10.300" cy="6.300" r="1.200" fill="#d0d0d0"/><path class="ic" style="stroke-width:1.600" d="M25.500 9l-3.300-3.300"/><path class="ic" style="stroke-width:1.100" d="M22.800 1.800a2.500 2.500 0 1 0 1.800 3.300l-1.800 .2l-.8-1.300z"/></svg>
<div style="left:25.5px;top:273.5px;width:103.0px;height:3px;background:#323232;"></div>
<div style="left:25.5px;top:276.5px;width:103.0px;height:10.5px;background:#343434;"></div>
<div style="left:25.5px;top:276.5px;width:11.5px;height:9.5px;background:#383838;"></div>
<div style="left:37px;top:276.5px;width:77.8px;height:11.5px;background:#484848;"></div>
<div style="left:25.5px;top:287.0px;width:103.0px;height:1px;background:#484848;"></div>
<svg style="left:25.5px;top:276.5px;" width="12" height="12" viewBox="0 0 12 12"><path d="M3 3.500h4M3 5.500h4M3 7.500h4" stroke="#626262" stroke-width="1" fill="none"/></svg>
<span class="t" style="left:54.8px;top:278.2px;font-size:7px;line-height:9px;color:#dcdcdc;transform:scaleX(0.8);">Brush size: Real G-Pen</span>
<svg style="left:37px;top:276.5px;" width="18" height="12" viewBox="0 0 18 12"><path d="M4.500 9.500l.8-2.500l6-6l1.700 1.700l-6 6z" fill="#cfcfcf"/><circle cx="11.500" cy="8.500" r="2.300" fill="#8a8a8a"/></svg>
<div style="left:25.5px;top:288px;width:103.0px;height:65px;background:#2f2f2f;"></div>
<div style="left:25.5px;top:288px;width:18.5px;height:5.2px;background:#3c3c3c;"></div>
<div style="left:25.5px;top:294.2px;width:18.5px;height:24.2px;background:#3c3c3c;"></div>
<div style="left:25.5px;top:319.3px;width:18.5px;height:24.2px;background:#3c3c3c;"></div>
<div style="left:25.5px;top:344.5px;width:18.5px;height:8.3px;background:#3c3c3c;"></div>
<div style="left:44.8px;top:288px;width:18.400000000000006px;height:5.2px;background:#3c3c3c;"></div>
<div style="left:44.8px;top:294.2px;width:18.400000000000006px;height:24.2px;background:#3c3c3c;"></div>
<div style="left:44.8px;top:319.3px;width:18.400000000000006px;height:24.2px;background:#3c3c3c;"></div>
<div style="left:44.8px;top:344.5px;width:18.400000000000006px;height:8.3px;background:#3c3c3c;"></div>
<div style="left:64px;top:288px;width:18.400000000000006px;height:5.2px;background:#3c3c3c;"></div>
<div style="left:64px;top:294.2px;width:18.400000000000006px;height:24.2px;background:#3c3c3c;"></div>
<div style="left:64px;top:319.3px;width:18.400000000000006px;height:24.2px;background:#3c3c3c;"></div>
<div style="left:64px;top:344.5px;width:18.400000000000006px;height:8.3px;background:#3c3c3c;"></div>
<div style="left:83.2px;top:288px;width:18.099999999999994px;height:5.2px;background:#3c3c3c;"></div>
<div style="left:83.2px;top:294.2px;width:18.099999999999994px;height:24.2px;background:#3c3c3c;"></div>
<div style="left:83.2px;top:319.3px;width:18.099999999999994px;height:24.2px;background:#5b6788;"></div>
<div style="left:83.2px;top:344.5px;width:18.099999999999994px;height:8.3px;background:#3c3c3c;"></div>
<div style="left:102px;top:288px;width:18.299999999999997px;height:5.2px;background:#3c3c3c;"></div>
<div style="left:102px;top:294.2px;width:18.299999999999997px;height:24.2px;background:#3c3c3c;"></div>
<div style="left:102px;top:319.3px;width:18.299999999999997px;height:24.2px;background:#3c3c3c;"></div>
<div style="left:102px;top:344.5px;width:18.299999999999997px;height:8.3px;background:#3c3c3c;"></div>
<div style="left:86.5px;top:333.7px;width:11px;height:9.5px;background:#4b5570;"></div>
<span class="t" style="left:25.5px;width:18.5px;top:309px;font-size:7.500px;line-height:9px;color:#d8d8d8;text-align:center;transform:scaleX(.88);transform-origin:50% 50%;">3</span>
<span class="t" style="left:25.5px;width:18.5px;top:334px;font-size:7.500px;line-height:9px;color:#d8d8d8;text-align:center;transform:scaleX(.88);transform-origin:50% 50%;">8</span>
<span class="t" style="left:44.8px;width:18.400000000000006px;top:309px;font-size:7.500px;line-height:9px;color:#d8d8d8;text-align:center;transform:scaleX(.88);transform-origin:50% 50%;">4</span>
<span class="t" style="left:44.8px;width:18.400000000000006px;top:334px;font-size:7.500px;line-height:9px;color:#d8d8d8;text-align:center;transform:scaleX(.88);transform-origin:50% 50%;">10</span>
<span class="t" style="left:64px;width:18.400000000000006px;top:309px;font-size:7.500px;line-height:9px;color:#d8d8d8;text-align:center;transform:scaleX(.88);transform-origin:50% 50%;">5</span>
<span class="t" style="left:64px;width:18.400000000000006px;top:334px;font-size:7.500px;line-height:9px;color:#d8d8d8;text-align:center;transform:scaleX(.88);transform-origin:50% 50%;">12</span>
<span class="t" style="left:83.2px;width:18.099999999999994px;top:309px;font-size:7.500px;line-height:9px;color:#d8d8d8;text-align:center;transform:scaleX(.88);transform-origin:50% 50%;">6</span>
<span class="t" style="left:83.2px;width:18.099999999999994px;top:334px;font-size:7.500px;line-height:9px;color:#d8d8d8;text-align:center;transform:scaleX(.88);transform-origin:50% 50%;">15</span>
<span class="t" style="left:102px;width:18.299999999999997px;top:309px;font-size:7.500px;line-height:9px;color:#d8d8d8;text-align:center;transform:scaleX(.88);transform-origin:50% 50%;">7</span>
<span class="t" style="left:102px;width:18.299999999999997px;top:334px;font-size:7.500px;line-height:9px;color:#d8d8d8;text-align:center;transform:scaleX(.88);transform-origin:50% 50%;">17</span>
<svg style="left:0px;top:0px;" width="130" height="360" viewBox="0 0 130 360"><circle cx="34.8" cy="303.700" r="0.55" fill="#fff"/><circle cx="34.8" cy="328.700" r="1.8" fill="#fff"/><path d="M32.2 290.500h5" stroke="#9a9a9a" stroke-width=".8" opacity=".7"/><circle cx="54.0" cy="303.700" r="0.75" fill="#fff"/><circle cx="54.0" cy="328.700" r="2.2" fill="#fff"/><path d="M51.5 290.500h5" stroke="#9a9a9a" stroke-width=".8" opacity=".7"/><circle cx="73.2" cy="303.700" r="1.0" fill="#fff"/><circle cx="73.2" cy="328.700" r="2.7" fill="#fff"/><path d="M70.7 290.500h5" stroke="#9a9a9a" stroke-width=".8" opacity=".7"/><circle cx="92.2" cy="303.700" r="1.2" fill="#fff"/><circle cx="92.2" cy="328.700" r="3.4" fill="#fff"/><path d="M89.8 290.500h5" stroke="#9a9a9a" stroke-width=".8" opacity=".7"/><circle cx="111.2" cy="303.700" r="1.5" fill="#fff"/><circle cx="111.2" cy="328.700" r="3.9" fill="#fff"/><path d="M108.7 290.500h5" stroke="#9a9a9a" stroke-width=".8" opacity=".7"/></svg>
<div style="left:25.5px;top:344.5px;width:18.5px;height:8.3px;"><div style="left:4.8px;top:3.5px;width:9.0px;height:9.0px;border-radius:50%;background:#fff;"></div></div>
<div style="left:44.8px;top:344.5px;width:18.400000000000006px;height:8.3px;"><div style="left:3.7px;top:2.7px;width:11.0px;height:11.0px;border-radius:50%;background:#fff;"></div></div>
<div style="left:64px;top:344.5px;width:18.400000000000006px;height:8.3px;"><div style="left:2.5px;top:1.8px;width:13.4px;height:13.4px;border-radius:50%;background:#fff;"></div></div>
<div style="left:83.2px;top:344.5px;width:18.099999999999994px;height:8.3px;"><div style="left:1.5px;top:1.5px;width:15.0px;height:15.0px;border-radius:50%;background:#fff;"></div></div>
<div style="left:102px;top:344.5px;width:18.299999999999997px;height:8.3px;"><div style="left:1.6px;top:1.8px;width:15.0px;height:15.0px;border-radius:50%;background:#fff;"></div></div>
<div style="left:121.5px;top:289.5px;width:7px;height:62px;background:#4c4c4c;"></div>
<div style="left:122.3px;top:302.5px;width:5px;height:11.5px;background:#5e5e5e;border-radius:2.500px;"></div>
<svg style="left:121.5px;top:289.5px;" width="7" height="62" viewBox="0 0 7 62"><rect x="0" y="0" width="7" height="7" fill="#565656"/><rect x="0" y="55" width="7" height="7" fill="#565656"/><path class="ic" style="stroke:#a0a0a0;stroke-width:.9" d="M2 4.500l1.500-1.500l1.500 1.500M2 57.500l1.500 1.500l1.500-1.500"/></svg>
<div style="left:25.5px;top:353.3px;width:103.0px;height:10.5px;background:#343434;"></div>
<div style="left:25.5px;top:353.3px;width:11.5px;height:10px;background:#383838;"></div>
<div style="left:37px;top:353.3px;width:17.3px;height:11.5px;background:#484848;"></div>
<div style="left:55px;top:353.3px;width:18px;height:9.8px;background:#3e3e3e;"></div>
<div style="left:74px;top:353.3px;width:18px;height:9.8px;background:#3e3e3e;"></div>
<div style="left:93px;top:353.3px;width:18px;height:9.8px;background:#3e3e3e;"></div>
<div style="left:112px;top:353.3px;width:9.5px;height:9.8px;background:#3e3e3e;"></div>
<svg style="left:25px;top:353px;" width="105" height="12" viewBox="0 0 105 12"><path d="M3.500 3.500h4M3.500 5.500h4M3.500 7.500h4" stroke="#626262" stroke-width="1" fill="none"/><circle class="ic" cx="20.700" cy="7" r="4.200"/><rect x="18.700" y="5" width="4" height="4" rx=".8" fill="#dcdcdc"/><path class="icd" style="stroke:#7c7c7c" d="M35.500 4.500h7v6h-7z M38.500 4.500v3.500h4"/><rect x="35.500" y="8" width="3" height="2.500" fill="#7c7c7c"/><path class="icd" style="stroke:#7c7c7c" d="M54 4.500h8M54 7h8M54 9.500h8M57 3.500v2M60 6v2M56 8.500v2"/><path d="M73 10.500l2.500-5.500l2 3l2-4l2.500 6.500z" fill="#7c7c7c"/><path class="icd" style="stroke:#7c7c7c" d="M89 4.500h3v6h-3zM93.500 4.500h2.500v6h-2.500z"/><rect x="97" y="1" width="6.500" height="9.500" fill="#444" stroke="#8a8a8a" stroke-width=".7"/><path class="ic" style="stroke:#c8c8c8;stroke-width:.9" d="M98.700 5l1.600 1.600l1.600-1.600"/></svg>
<div style="left:24.5px;top:364.5px;width:104.5px;height:175.5px;background:#4a4a4a;"></div>
<div style="left:25.799999999999997px;top:397.2px;width:102px;height:102px;border-radius:50%;background:conic-gradient(from 0deg,#ffff00,#80ff00,#00ff00,#00ff80,#00ffff,#0080ff,#0000ff,#8000ff,#ff00ff,#ff0080,#ff0000,#ff8000,#ffff00);-webkit-mask:radial-gradient(circle,transparent 40.9px,#000 41.699999999999996px,#000 50.5px,transparent 51.3px);mask:radial-gradient(circle,transparent 40.9px,#000 41.699999999999996px,#000 50.5px,transparent 51.3px);"></div>
<div style="left:49.6px;top:420.9px;width:55px;height:54.8px;background:linear-gradient(to top,#000 0%,rgba(0,0,0,.820) 22%,rgba(0,0,0,.450) 60%,rgba(0,0,0,.100) 100%),linear-gradient(to right,#ffffff,#0a50f0);"></div>
<svg style="left:0px;top:0px;" width="130" height="540" viewBox="0 0 130 540"><circle cx="99.400" cy="468" r="2.300" fill="none" stroke="#fff" stroke-width="1"/><circle cx="99.400" cy="468" r="3.100" fill="none" stroke="#222" stroke-width=".5"/><g transform="translate(93.3 491.3) rotate(-18)"><rect x="-2.200" y="-4.600" width="4.400" height="9.200" fill="#dfe6ff" stroke="#222" stroke-width=".8"/><rect x="-1" y="-3.300" width="2" height="6.600" fill="#2b5cf0"/></g></svg>
<div style="left:33.5px;top:520.5px;width:9px;height:8.2px;background:#ffffff;border:1px solid #8a8a8a;"></div>
<div style="left:25.5px;top:514px;width:11px;height:11px;background:#050b1e;border:1px solid #8fa0dc;border-radius:2px;"></div>
<div style="left:26px;top:531.5px;width:17px;height:6px;background:#4a4a4a;border:1px solid #7a7a7a;border-radius:3px;"></div>
<svg style="left:26px;top:531.5px;" width="17" height="6" viewBox="0 0 17 6"><path d="M2.500 3.200c1.500-1.200 2.500 1 4 0s2.500 1 4 0s2.500.8 4 0" stroke="#f0f0f0" stroke-width="1.300" fill="none"/></svg>
<div style="left:52.3px;top:531.5px;width:5.5px;height:5.8px;background:#9c9c9c;border-radius:1px;"></div>
<span class="t" style="left:52.9px;top:531px;font-size:5.5px;line-height:7.5px;color:#3a3a3a;transform:scaleX(0.9);font-weight:bold;">H</span>
<div style="left:72.6px;top:531.5px;width:5.5px;height:5.8px;background:#9c9c9c;border-radius:1px;"></div>
<span class="t" style="left:73.19999999999999px;top:531px;font-size:5.5px;line-height:7.5px;color:#3a3a3a;transform:scaleX(0.9);font-weight:bold;">S</span>
<div style="left:92.3px;top:531.5px;width:5.5px;height:5.8px;background:#9c9c9c;border-radius:1px;"></div>
<span class="t" style="left:92.89999999999999px;top:531px;font-size:5.5px;line-height:7.5px;color:#3a3a3a;transform:scaleX(0.9);font-weight:bold;">V</span>
<span class="t" style="left:59.8px;top:529.8px;font-size:7.5px;line-height:9.5px;color:#d6d6d6;transform:scaleX(0.86);">219</span>
<span class="t" style="left:82.1px;top:529.8px;font-size:7.5px;line-height:9.5px;color:#d6d6d6;transform:scaleX(0.86);">92</span>
<span class="t" style="left:103px;top:529.8px;font-size:7.5px;line-height:9.5px;color:#d6d6d6;transform:scaleX(0.86);">14</span>
<svg style="left:115px;top:525px;" width="14" height="14" viewBox="0 0 14 14"><circle class="ic" cx="6" cy="6.500" r="4.600" style="stroke:#c8c8c8"/><path class="ic" style="stroke:#c8c8c8;stroke-width:.9" d="M4.500 4l4 2.500l-4 2.500z"/></svg>
<div style="left:130px;top:59px;width:700px;height:350.5px;background:#2c2c2c;"></div>
<div style="left:236.4px;top:119.3px;width:480.6px;height:270.4px;background:#bebebe;"></div>
<svg style="left:236px;top:119px;overflow:hidden" width="481" height="271" viewBox="236 119 481 271"><g id="art"><path class="mg" style="stroke-width:2.40" d="M237.800 120L238 390"/><path class="mg" style="stroke-width:1.70" d="M239.600 120L239.300 300L238.300 390"/><path class="mg" style="stroke-width:0.70" d="M240.500 121L240.300 200"/><path class="mg" style="stroke-width:2.00" d="M716 119.500L716.300 390"/><path class="mg" style="stroke-width:1.00" d="M714.600 120L715 250L714.800 390"/><path class="mg" style="stroke-width:1.30" d="M349.500 119.500L348.800 260L350.500 390"/><path class="mg" style="stroke-width:0.80" d="M351 121L350 250L351.800 389"/><path class="mg" style="stroke-width:0.50" d="M347.500 140L347 250L349 330"/><path class="mg" style="stroke-width:0.90" d="M350 119.500L376 166"/><path class="mg" style="stroke-width:0.60" d="M352 120L375 162"/><path class="mg" style="stroke-width:0.50" d="M354 119.500L377 164"/><path class="mg" style="stroke-width:1.00" d="M376 166L378.600 250L382 390"/><path class="mg" style="stroke-width:0.60" d="M375 168L377 250L379 300"/><path class="mg" style="stroke-width:0.90" d="M376 166.300L446 163L520 164.500L568 166.600"/><path class="mg" style="stroke-width:0.50" d="M380 167L446 164L530 165"/><path class="mg" style="stroke-width:0.60" d="M412 170L470 167.500L526 166.500"/><path class="mg" style="stroke-width:1.00" d="M575 166L575.600 280L576.500 390"/><path class="mg" style="stroke-width:0.50" d="M574.500 168L575 300"/><path class="mg" style="stroke-width:0.80" d="M575 166L606 119.500"/><path class="mg" style="stroke-width:0.60" d="M577 166.500L608 120"/><path class="mg" style="stroke-width:0.50" d="M579 163L603 125"/><path class="mg" style="stroke-width:1.30" d="M608.500 119.500L610 260L613.500 390"/><path class="mg" style="stroke-width:0.90" d="M611.500 120L612 250L615.500 390"/><path class="mg" style="stroke-width:0.60" d="M610 119.500L611 200L609 320L608 326"/><path class="bl" style="stroke-width:1.62" d="M441.300 219C440.500 205 440.500 190 442 178C444 160 458 146 484 143.500C508 142 523 155 526.500 175C528.500 190 528.500 205 528 216.500"/><path class="bl" style="stroke-width:0.73;opacity:.7" transform="translate(.8 .5)" d="M441.300 219C440.500 205 440.500 190 442 178C444 160 458 146 484 143.500C508 142 523 155 526.500 175C528.500 190 528.500 205 528 216.500"/><path class="bl" style="stroke-width:0.88" d="M442.500 215C442 200 442.500 186 444 177C447 161 460 148 483 145.500"/><path class="bl" style="stroke-width:0.88" d="M525 172C527 186 527.500 202 527 214"/><path class="bl" style="stroke-width:1.38" d="M441.300 213C455 208 470 206.500 485 206.500C500 206.500 515 208 527.800 210.500"/><path class="bl" style="stroke-width:0.62;opacity:.7" transform="translate(.8 .5)" d="M441.300 213C455 208 470 206.500 485 206.500C500 206.500 515 208 527.800 210.500"/><path class="bl" style="stroke-width:1.62" d="M441.300 219C446 227 462 231 483 231C505 231 522 226 528 216.500"/><path class="bl" style="stroke-width:0.73;opacity:.7" transform="translate(.8 .5)" d="M441.300 219C446 227 462 231 483 231C505 231 522 226 528 216.500"/><path class="bl" style="stroke-width:0.88" d="M444 222C452 228 466 230 480 230.500"/><path class="bl" style="stroke-width:1.50" d="M475.500 217.500L477 237.500M493.500 217L491.500 237M475.500 217.500C481 216 488 216 493.500 217M477 235C482 236 487 236 491.500 235"/><path class="bl" style="stroke-width:0.68;opacity:.7" transform="translate(.8 .5)" d="M475.500 217.500L477 237.500M493.500 217L491.500 237M475.500 217.500C481 216 488 216 493.500 217M477 235C482 236 487 236 491.500 235"/><path class="bl" style="stroke-width:1.25" d="M483 155C484 150 492 148.500 500 150.500C507 152.500 509 159 505.500 165C503 168 499.500 166.500 499 162.500C498.500 158 494 155 489 155.500C486 156 484 157 483 155z"/><path class="bl" style="stroke-width:0.56;opacity:.7" transform="translate(.8 .5)" d="M483 155C484 150 492 148.500 500 150.500C507 152.500 509 159 505.500 165C503 168 499.500 166.500 499 162.500C498.500 158 494 155 489 155.500C486 156 484 157 483 155z"/><path class="bl" style="stroke-width:1.12" d="M516.500 174A3.800 3.800 0 1 1 508.900 174A3.800 3.800 0 1 1 516.500 174M515.500 175A3 3 0 1 1 510 173"/><path class="bl" style="stroke-width:2.00" d="M437 239.500L480 238.300L536 236.800"/><path class="bl" style="stroke-width:0.90;opacity:.7" transform="translate(.8 .5)" d="M437 239.500L480 238.300L536 236.800"/><path class="bl" style="stroke-width:1.00" d="M436 241L476 240"/><path class="bl" style="stroke-width:1.38" d="M401.800 229.200L435 228.300L440 229L440 238M401.800 229.200L408.600 258.500L433.800 257.400L436 229M403.500 231L434 230"/><path class="bl" style="stroke-width:0.62;opacity:.7" transform="translate(.8 .5)" d="M401.800 229.200L435 228.300L440 229L440 238M401.800 229.200L408.600 258.500L433.800 257.400L436 229M403.500 231L434 230"/><path class="bl" style="stroke-width:0.75" d="M404 232L410 257M432 231L431 256"/><path class="bl" style="stroke-width:2.50" d="M427.300 244.800A7.300 7.300 0 1 1 412.700 244.800A7.300 7.300 0 1 1 427.300 244.800"/><path class="bl" style="stroke-width:1.12;opacity:.7" transform="translate(.8 .5)" d="M427.300 244.800A7.300 7.300 0 1 1 412.700 244.800A7.300 7.300 0 1 1 427.300 244.800"/><path class="bl" style="stroke-width:1.00" d="M425.500 245.500A5.800 5.800 0 1 1 413.900 244.300"/><path class="bl" style="stroke-width:1.38" d="M536 249.500C535.500 240 540 230 547 227C555 224 566 228 569 238C570.500 245 570 252 568.500 256C567 261 563.500 261 561 258.500C558 256 553 257.500 549 259.500C545 262 540 263 538 259C536.500 256 536 252 536 249.500"/><path class="bl" style="stroke-width:0.62;opacity:.7" transform="translate(.8 .5)" d="M536 249.500C535.500 240 540 230 547 227C555 224 566 228 569 238C570.500 245 570 252 568.500 256C567 261 563.500 261 561 258.500C558 256 553 257.500 549 259.500C545 262 540 263 538 259C536.500 256 536 252 536 249.500"/><path class="bl" style="stroke-width:0.75" d="M538 246C538 238 543 230 550 228.500"/><path class="bl" style="stroke-width:2.50" d="M558 246A7.300 7.300 0 1 1 543.400 246A7.300 7.300 0 1 1 558 246"/><path class="bl" style="stroke-width:1.12;opacity:.7" transform="translate(.8 .5)" d="M558 246A7.300 7.300 0 1 1 543.400 246A7.300 7.300 0 1 1 558 246"/><path class="bl" style="stroke-width:1.00" d="M556.300 246.700A5.800 5.800 0 1 1 544.700 245.500"/><path class="bl" style="stroke-width:1.88" d="M437 240C443 256 448 272 450 284C451 296 451 308 451.600 320.500L517 319.500C517.500 308 518.500 296 519.600 284C521 272 527 256 535.300 238"/><path class="bl" style="stroke-width:0.84;opacity:.7" transform="translate(.8 .5)" d="M437 240C443 256 448 272 450 284C451 296 451 308 451.600 320.500L517 319.500C517.500 308 518.500 296 519.600 284C521 272 527 256 535.300 238"/><path class="bl" style="stroke-width:0.88" d="M439.500 243C445 258 449.500 274 451.500 286C452.500 298 452.500 308 453 318M533 242C526 258 522.500 274 521 286C520 298 519 308 518.500 317"/><path class="bl" style="stroke-width:0.88" d="M452 323L516 321.500"/><path class="bl" style="stroke-width:1.62" d="M452 247.400L487 246L520.600 245.800M452 247.400C455 256 458 265 460.400 272.800C462.500 284 463.500 296 464.700 306.600L503.700 305.500C505.500 294 507.500 283 510 272.800C513 263 517 254 520.600 245.800"/><path class="bl" style="stroke-width:0.73;opacity:.7" transform="translate(.8 .5)" d="M452 247.400L487 246L520.600 245.800M452 247.400C455 256 458 265 460.400 272.800C462.500 284 463.500 296 464.700 306.600L503.700 305.500C505.500 294 507.500 283 510 272.800C513 263 517 254 520.600 245.800"/><path class="bl" style="stroke-width:0.88" d="M454 249.500L519 247.800M466 305L503 303.800M453.500 250C457 262 460 272 462 282"/><path class="bl" style="stroke-width:1.00" d="M470 248.500L498.400 270.700M488 246.400L510 264.300M502.700 247.400L514.300 257M458.300 254.800L496.300 287.600M462.600 271.700L500.600 302.300M464.700 283.300L491 304.400M466.800 293.900L479.400 303.400M478 247.500L497 263M499.500 275L506 281"/><path class="bl" style="stroke-width:2.00" d="M500 260.500C497.800 261.500 497.600 266 498.300 270L498.300 284C497.300 288 497 291.500 499.300 292.300C501.800 292.300 502.300 289 501.600 285L502 268C502.800 264 502.300 261 500 260.500M500 262.500L500 290.500M499 265L499.300 289M501 264L500.800 288"/><path class="bl" style="stroke-width:0.90;opacity:.7" transform="translate(.8 .5)" d="M500 260.500C497.800 261.500 497.600 266 498.300 270L498.300 284C497.300 288 497 291.500 499.300 292.300C501.800 292.300 502.300 289 501.600 285L502 268C502.800 264 502.300 261 500 260.500M500 262.500L500 290.500M499 265L499.300 289M501 264L500.800 288"/><path class="bl" style="stroke-width:1.25" d="M413.200 260L416 295L418.300 321.400M429.800 260L429 295L428.600 321M415.500 262L419.500 320M421 262L423 318"/><path class="bl" style="stroke-width:0.56;opacity:.7" transform="translate(.8 .5)" d="M413.200 260L416 295L418.300 321.400M429.800 260L429 295L428.600 321M415.500 262L419.500 320M421 262L423 318"/><path class="bl" style="stroke-width:1.25" d="M412 324C412 322 436.700 321.500 436.700 323.500L436.700 332.500C436.700 334.500 412 335 412 333zM415.500 323.500C414 326 414 331 415.500 334M433 323C435 326 435 331 433.500 333.500"/><path class="bl" style="stroke-width:0.56;opacity:.7" transform="translate(.8 .5)" d="M412 324C412 322 436.700 321.500 436.700 323.500L436.700 332.500C436.700 334.500 412 335 412 333zM415.500 323.500C414 326 414 331 415.500 334M433 323C435 326 435 331 433.500 333.500"/><path class="bl" style="stroke-width:1.25" d="M414.500 335L415.500 365L417 390M435 335L434 365L432.400 390M419 336L421 390M429 336L428 390"/><path class="bl" style="stroke-width:0.56;opacity:.7" transform="translate(.8 .5)" d="M414.500 335L415.500 365L417 390M435 335L434 365L432.400 390M419 336L421 390M429 336L428 390"/><path class="bl" style="stroke-width:1.25" d="M542.300 262.700L543 295L543.600 321.400M557.600 260L557 295L556.300 321M544.500 265L546 320"/><path class="bl" style="stroke-width:0.56;opacity:.7" transform="translate(.8 .5)" d="M542.300 262.700L543 295L543.600 321.400M557.600 260L557 295L556.300 321M544.500 265L546 320"/><path class="bl" style="stroke-width:1.25" d="M539.700 324C539.700 322 561.400 321.500 561.400 323.500L561.400 332C561.400 334 539.700 334.500 539.700 332.500zM543 323.500C541.500 326 541.500 331 543 333.500M558 323C559.800 326 559.800 330 558.300 333"/><path class="bl" style="stroke-width:0.56;opacity:.7" transform="translate(.8 .5)" d="M539.700 324C539.700 322 561.400 321.500 561.400 323.500L561.400 332C561.400 334 539.700 334.500 539.700 332.500zM543 323.500C541.500 326 541.500 331 543 333.500M558 323C559.800 326 559.800 330 558.300 333"/><path class="bl" style="stroke-width:1.25" d="M539.700 335L540.500 365L542.300 390M560.200 335L559 365L557.600 390M545 336L546 390"/><path class="bl" style="stroke-width:0.56;opacity:.7" transform="translate(.8 .5)" d="M539.700 335L540.500 365L542.300 390M560.200 335L559 365L557.600 390M545 336L546 390"/><path class="bl" style="stroke-width:1.25" d="M470.700 322.500L470.700 331.500L492.400 331.500L492.400 322M468 323L468 331M495 322.500L495 330.500"/><path class="bl" style="stroke-width:0.56;opacity:.7" transform="translate(.8 .5)" d="M470.700 322.500L470.700 331.500L492.400 331.500L492.400 322M468 323L468 331M495 322.500L495 330.500"/><path class="bl" style="stroke-width:1.25" d="M452.800 331.700C451 340 451 350 451.500 357C452 370 454 380 455.400 390M456 336C455 348 455.500 366 458.500 390"/><path class="bl" style="stroke-width:0.56;opacity:.7" transform="translate(.8 .5)" d="M452.800 331.700C451 340 451 350 451.500 357C452 370 454 380 455.400 390M456 336C455 348 455.500 366 458.500 390"/><path class="bl" style="stroke-width:1.25" d="M461.800 334C461.500 342 463.500 349 468 350.800C472 351.500 475 348.500 475.800 345.700C474 352 472.500 360 472 367.400L472 390M465 336C465.500 342 467 346 470 347.500"/><path class="bl" style="stroke-width:0.56;opacity:.7" transform="translate(.8 .5)" d="M461.800 334C461.500 342 463.500 349 468 350.800C472 351.500 475 348.500 475.800 345.700C474 352 472.500 360 472 367.400L472 390M465 336C465.500 342 467 346 470 347.500"/><path class="bl" style="stroke-width:1.00" d="M475.800 345.700L469.500 344.400M491 344.400L484.500 345.700"/><path class="bl" style="stroke-width:1.25" d="M506.500 334C507 342 504 349 498.800 350.800C495 351.500 492 348.500 491 345C493.500 352 497.500 360 498.800 367.400L498.800 390M503 336C502.500 342 500.500 346 497.500 347.500"/><path class="bl" style="stroke-width:0.56;opacity:.7" transform="translate(.8 .5)" d="M506.500 334C507 342 504 349 498.800 350.800C495 351.500 492 348.500 491 345C493.500 352 497.500 360 498.800 367.400L498.800 390M503 336C502.500 342 500.500 346 497.500 347.500"/><path class="bl" style="stroke-width:1.25" d="M513 331.700C516 340 518.500 350 519.300 357C519.500 370 518 380 516.700 390M510 336C513 348 514.500 366 513.500 390"/><path class="bl" style="stroke-width:0.56;opacity:.7" transform="translate(.8 .5)" d="M513 331.700C516 340 518.500 350 519.300 357C519.500 370 518 380 516.700 390M510 336C513 348 514.500 366 513.500 390"/><ellipse cx="462.300" cy="329.500" rx="5" ry="5.500" fill="#1f3f8c" opacity=".9"/><ellipse cx="505" cy="328.800" rx="5" ry="5.500" fill="#1f3f8c" opacity=".9"/><ellipse class="bl" cx="462.300" cy="329.500" rx="6" ry="6.300"/><ellipse class="bl" cx="505" cy="328.800" rx="6" ry="6.300"/><path class="og" style="stroke-width:0.90" d="M644 166.500L643.200 196M645.500 168L676 167M677.500 166L677.800 196.500L646 197.500M643 194L676 196.500M675.500 167L676.500 192"/><path class="og" style="stroke-width:0.90" d="M651.500 184.500C651 177 653 171.500 658 171.500C664 171.500 666 177 665.500 184L651.500 184.500M656 185.500L656 192.500M660.500 185.500L660.500 192.500"/><path class="og" style="stroke-width:1.00" d="M690.700 169.500L691.500 188M686 180.500L697 179L692 188.500L686 180.500"/><path class="og" style="stroke-width:0.90" d="M641.500 212L642.500 240M642 211.500L674 210.500M673 211L674.500 239.500M643 240.500L673 239M644 213L672 212.500M671 213L672 238"/><path class="og" style="stroke-width:0.90" d="M649 218.500L667 217.500M657 219L657 227M652 227L652 221M662 226.500L662 220.500M646 229L672 227.500M646 229L650.500 237.500L665 236.500L669 228"/><path class="og" style="stroke-width:0.90" d="M642.500 256L644.500 287M642 255.500L676 253.500M676.500 254L676.500 285M645 287.500L677 284.500M644 258L675 256"/><path class="og" style="stroke-width:0.90" d="M654 266.500L669 265L666 275L657 275.500L654 266.500M657 276L656 284L668 283L667 275M660 279L665 278.500"/><path class="og" style="stroke-width:0.90" d="M646.500 300L646 331M647 299.500L676.500 298M676.500 298.500L677 329M646.500 330L677 327.500M650 302L650.500 328M653 303L653.500 329"/><path class="og" style="stroke-width:0.80" d="M657 305L672 303.500L672.500 326M658 306L658.500 329M662 311L661 329M666 309L664 329M669 306L668.500 328M657 318L672 316.500"/><path class="og" style="stroke-width:0.80" d="M645.500 163.500L668 161.500"/><text x="621" y="149" transform="rotate(-11 621 149)" font-family="Liberation Serif,serif" font-style="italic" font-size="17" fill="#9a5a1c" textLength="41" lengthAdjust="spacingAndGlyphs">move</text><text x="644.500" y="163" transform="rotate(-9 644 163)" font-family="Liberation Serif,serif" font-style="italic" font-size="17" fill="#9a5a1c" textLength="43" lengthAdjust="spacingAndGlyphs">down</text></g></svg>
<div style="left:830px;top:59px;width:8px;height:350px;background:#444444;"></div>
<div style="left:831.5px;top:153px;width:5px;height:145px;background:#5a5a5a;border-radius:2.500px;"></div>
<svg style="left:830px;top:59px;" width="8" height="350" viewBox="0 0 8 350"><rect x="0" y=".5" width="8" height="7.500" fill="#565656"/><rect x="0" y="343.500" width="8" height="6.500" fill="#565656"/><path class="ic" style="stroke:#a8a8a8;stroke-width:.9" d="M2.500 5l1.500-1.500l1.500 1.500M2.500 346l1.500 1.500l1.500-1.500"/></svg>
<div style="left:130px;top:409.5px;width:708px;height:8px;background:#484848;"></div>
<div style="left:338px;top:409.8px;width:484.5px;height:7px;background:#404040;"></div>
<div style="left:471px;top:410.3px;width:220px;height:6px;background:#5a5a5a;border-radius:3px;"></div>
<div style="left:822.5px;top:409.5px;width:7.5px;height:7.5px;background:#565656;"></div>
<div style="left:330px;top:409.5px;width:8px;height:7.5px;background:#565656;"></div>
<svg style="left:0px;top:0px;" width="960" height="420" viewBox="0 0 960 420"><rect x="131" y="410" width="60.500" height="6.800" fill="#2e2e2e" stroke="#5c5c5c" stroke-width=".6"/><path d="M147 416.500L191 410.500V416.500z" fill="#444"/><path d="M161 409.500v8" stroke="#8c8c8c" stroke-width="1.200"/><rect x="230.800" y="410" width="60.500" height="6.800" fill="#2e2e2e" stroke="#5c5c5c" stroke-width=".6"/><path d="M262 410.500L276 410.500L291 416.500H262z" fill="#444"/><path d="M262 409.500v8" stroke="#8c8c8c" stroke-width="1.200"/><path class="ic" style="stroke:#b4b4b4;stroke-width:.9" d="M196.500 413.500h4M209 413.500h4.500M211.200 411.300v4.500"/><rect x="222" y="411.800" width="3.600" height="3.600" fill="#d0d0d0"/><path class="ic" style="stroke:#a8a8a8;stroke-width:.9" d="M296.500 415.500a2.500 2.500 0 1 1 5 0M308.500 415.500a2.500 2.500 0 1 1 5 0M313.500 415.500l.8-1.500M296.500 415.500l-.8-1.500"/><circle class="ic" style="stroke:#a8a8a8;stroke-width:.9" cx="324" cy="413.500" r="2.600"/><path class="ic" style="stroke:#a8a8a8;stroke-width:.9" d="M324 411.500v2h1.300M335 411.800l-1.700 1.700l1.700 1.700M825.300 411.800l1.700 1.700l-1.700 1.700"/></svg>
<span class="t" style="left:132px;top:408.8px;font-size:7px;line-height:9px;color:#d0d0d0;transform:scaleX(0.86);">50.0</span>
<span class="t" style="left:232px;top:408.8px;font-size:7px;line-height:9px;color:#d0d0d0;transform:scaleX(0.86);">0.0</span>
<div style="left:130px;top:417.5px;width:708px;height:122.5px;background:#343434;"></div>
<div style="left:143px;top:419.5px;width:695px;height:10px;background:#3a3a3a;"></div>
<div style="left:143px;top:419.5px;width:11.5px;height:10px;background:#383838;"></div>
<div style="left:154.7px;top:419.5px;width:41.5px;height:11px;background:#484848;"></div>
<div style="left:197px;top:419.5px;width:55.5px;height:9.8px;background:#404040;"></div>
<span class="t" style="left:172.3px;top:420.7px;font-size:7px;line-height:9px;color:#dcdcdc;transform:scaleX(0.88);">Timeline</span>
<span class="t" style="left:215.5px;top:420.7px;font-size:7px;line-height:9px;color:#6e6e6e;transform:scaleX(0.88);">All sides view</span>
<div style="left:143px;top:429.5px;width:695px;height:16px;background:#484848;"></div>
<svg style="left:0px;top:0px;" width="960" height="460" viewBox="0 0 960 460"><path d="M146.500 422.500h4M146.500 424.500h4M146.500 426.500h4" stroke="#626262" stroke-width="1" fill="none"/><rect class="ic" x="158.500" y="421" width="6.500" height="8" rx="1"/><path d="M161.700 423.500v.8M161.700 426v.8" stroke="#d0d0d0" stroke-width="1.200"/><path class="icd" d="M201.500 422.500h8v6h-8zM203.500 424l4 3M207.500 424l-4 3"/><rect class="icd" style="stroke:#5e5e5e" x="144.500" y="433.500" width="8.500" height="8.500"/><path class="icd" style="stroke:#5e5e5e" d="M145.500 439c1.500-4 3-4 3.500-1s2 2 3.500-1.500"/><rect class="ic" x="163.500" y="433.500" width="8.500" height="9.500" rx="1"/><path d="M165.700 434v8.500M169.800 434v8.500" stroke="#d0d0d0" stroke-width=".8"/><path d="M167.700 436v1M167.700 439.500v1" stroke="#d0d0d0" stroke-width="1.200"/><rect class="ic" x="175.500" y="433.500" width="8.500" height="9.500" rx="1"/><path d="M177.700 434v8.500M181.800 434v8.500" stroke="#d0d0d0" stroke-width=".8"/><path d="M179.700 436v1M179.700 439.500v1" stroke="#d0d0d0" stroke-width="1.200"/><circle cx="184.300" cy="442.500" r="2" fill="#484848" stroke="#d0d0d0" stroke-width=".7"/><path d="M183.300 442.500h2M184.300 441.500v2" stroke="#d0d0d0" stroke-width=".6"/><circle class="ic" cx="197.800" cy="437" r="3.300"/><path class="ic" style="stroke-width:1.200" d="M200.200 439.700l2.500 2.800"/><path class="ic" style="stroke-width:.8" d="M196.200 437h3.200"/><circle class="ic" cx="210.500" cy="437" r="3.300"/><path class="ic" style="stroke-width:1.200" d="M212.900 439.700l2.500 2.800"/><path class="ic" style="stroke-width:.8" d="M208.900 437h3.200M210.500 435.400v3.200"/><path d="M227.300 435v7.500M234 435v7.500l-5.500-3.750z M246 435v7.500M244.500 435v7.500l-5.500-3.750z M252 434.500v8.500l7-4.250z M264.800 435v7.500M266.300 435l5.500 3.750l-5.500 3.750z M284 435v7.500M277.300 435l5.500 3.750l-5.500 3.750z" fill="#d8d8d8" stroke="#d8d8d8" stroke-width=".6" stroke-linejoin="round"/><rect x="293" y="432" width="12" height="12.500" fill="#5b6788"/><path class="ic" style="stroke:#dfe3f0" d="M295.500 437.500v-1a1.500 1.500 0 0 1 1.500-1.500h5.500M301 433.500l1.500 1.500l-1.500 1.500M302.500 439v1a1.500 1.500 0 0 1-1.500 1.500h-5.500M297 440l-1.500 1.500l1.500 1.500"/><rect x="312.5" y="434.500" width="9.500" height="7.500" rx="1" fill="#858585" stroke="#d0d0d0" stroke-width="1"/><path d="M314.0 433.800v1.500M316.2 433.800v1.500M318.4 433.800v1.500M320.6 433.800v1.500" stroke="#d0d0d0" stroke-width=".9"/><circle cx="321.5" cy="442" r="2" fill="#484848" stroke="#d0d0d0" stroke-width=".7"/><path d="M320.5 442h2M321.5 441v2" stroke="#d0d0d0" stroke-width=".6"/><rect x="326" y="434.500" width="9.500" height="7.500" rx="1" fill="#858585" stroke="#d0d0d0" stroke-width="1"/><path d="M327.5 433.800v1.500M329.7 433.800v1.500M331.9 433.800v1.500M334.1 433.800v1.500" stroke="#d0d0d0" stroke-width=".9"/><circle cx="335" cy="442" r="2" fill="#484848" stroke="#d0d0d0" stroke-width=".7"/><path d="M334 442h2M335 441v2" stroke="#d0d0d0" stroke-width=".6"/><rect x="338.5" y="434.500" width="9.500" height="7.500" rx="1" fill="#858585" stroke="#d0d0d0" stroke-width="1"/><path d="M340.0 433.800v1.500M342.2 433.800v1.500M344.4 433.800v1.500M346.6 433.800v1.500" stroke="#d0d0d0" stroke-width=".9"/><rect x="341.5" y="440.800" width="3.500" height="2.400" rx="1.200" fill="#484848" stroke="#d0d0d0" stroke-width=".7"/><rect x="344.5" y="440.800" width="3.500" height="2.400" rx="1.200" fill="none" stroke="#d0d0d0" stroke-width=".7"/><rect x="351" y="434.500" width="9.500" height="7.500" rx="1" fill="#555" stroke="#6a6a6a" stroke-width="1"/><path d="M352.5 433.800v1.500M354.7 433.800v1.500M356.9 433.800v1.500M359.1 433.800v1.500" stroke="#6a6a6a" stroke-width=".9"/><rect x="354" y="440.800" width="3.500" height="2.400" rx="1.200" fill="#484848" stroke="#6a6a6a" stroke-width=".7"/><rect x="357" y="440.800" width="3.500" height="2.400" rx="1.200" fill="none" stroke="#6a6a6a" stroke-width=".7"/><rect class="ic" x="369.500" y="434" width="7" height="6.500" rx="1"/><rect x="371.500" y="436" width="7.500" height="6.500" rx="1" fill="#9a9a9a" stroke="#d0d0d0" stroke-width=".8"/><path class="icd" d="M389 435l3.500-1.500l5 5.500l-3 2.500zM391 440l3 3M395 434.500l2 4"/><rect x="399" y="431" width="9.300" height="13.500" fill="#555"/><path class="ic" style="stroke:#d0d0d0;stroke-width:.9" d="M401.500 436.800l2.200 2.200l2.200-2.200"/><path class="icd" d="M412 438.500l4-4l4.500 2.500l-4 4zM416 440h4.500v3.500h-4.500z"/><path class="ic" style="stroke-width:1.200" d="M425.500 435h7.500l-2 7h-7.500z"/><path class="icd" d="M437 442.500l5.500-7M436.500 443h7"/></svg>
<span class="t" style="left:726.5px;top:433.5px;font-size:7.5px;line-height:9.5px;color:#d0d0d0;transform:scaleX(0.86);">138</span>
<span class="t" style="left:752px;top:433.5px;font-size:7.5px;line-height:9.5px;color:#d0d0d0;transform:scaleX(0.86);">/</span>
<span class="t" style="left:773.5px;top:433.5px;font-size:7.5px;line-height:9.5px;color:#d0d0d0;transform:scaleX(0.86);">1</span>
<span class="t" style="left:796.5px;top:433.5px;font-size:7.5px;line-height:9.5px;color:#d0d0d0;transform:scaleX(0.86);">/</span>
<span class="t" style="left:811.6px;top:433.5px;font-size:7.5px;line-height:9.5px;color:#d0d0d0;transform:scaleX(0.86);">6555</span>
<div style="left:143px;top:445.5px;width:85px;height:15.5px;background:#5c5c5c;border:1px solid #6a6a6a;border-radius:1px;"></div>
<span class="t" style="left:164.5px;top:448px;font-size:8px;line-height:10px;color:#e0e0e0;transform:scaleX(0.9);">Toryboard</span>
<svg style="left:216px;top:449px;" width="12" height="10" viewBox="0 0 12 10"><path class="ic" style="stroke:#d8d8d8" d="M2.500 3l3 3l3-3"/></svg>
<div style="left:228.5px;top:445.5px;width:1.5px;height:95px;background:#343434;"></div>
<div style="left:230px;top:445.5px;width:608px;height:16.3px;background:#4a4a4a;"></div>
<div style="left:293.26px;top:445.5px;width:112.79999999999995px;height:16.3px;background:#5e6377;"></div>
<div style="left:518.86px;top:445.5px;width:112.79999999999995px;height:16.3px;background:#5e6377;"></div>
<div style="left:744.46px;top:445.5px;width:93.53999999999996px;height:16.3px;background:#5e6377;"></div>
<div style="left:230px;top:461.8px;width:600px;height:16.2px;background:#4a4a4a;"></div>
<div style="left:293.26px;top:461.8px;width:112.79999999999995px;height:69.8px;background:#5a5e6c;"></div>
<div style="left:518.86px;top:461.8px;width:112.79999999999995px;height:69.8px;background:#5a5e6c;"></div>
<div style="left:744.46px;top:461.8px;width:85.53999999999996px;height:69.8px;background:#5a5e6c;"></div>
<div style="left:230px;top:478.5px;width:600px;height:1px;background:#7a7a7a;"></div>
<div style="left:230px;top:479.5px;width:600px;height:3.8px;background:#3b3b3b;"></div>
<div style="left:230px;top:483.3px;width:600px;height:1px;background:#6c6c6c;"></div>
<div style="left:230px;top:484.3px;width:600px;height:9.8px;background:#3a3a3a;"></div>
<div style="left:293.26px;top:479.5px;width:112.79999999999995px;height:3.8px;background:#3e3f44;"></div>
<div style="left:293.26px;top:484.3px;width:112.79999999999995px;height:9.8px;background:#3c3d42;"></div>
<div style="left:518.86px;top:479.5px;width:112.79999999999995px;height:3.8px;background:#3e3f44;"></div>
<div style="left:518.86px;top:484.3px;width:112.79999999999995px;height:9.8px;background:#3c3d42;"></div>
<div style="left:744.46px;top:479.5px;width:85.53999999999996px;height:3.8px;background:#3e3f44;"></div>
<div style="left:744.46px;top:484.3px;width:85.53999999999996px;height:9.8px;background:#3c3d42;"></div>
<div style="left:230px;top:494.1px;width:600px;height:1.1px;background:#7a7a7a;"></div>
<div style="left:230px;top:495.2px;width:600px;height:1px;background:#7a7a7a;"></div>
<div style="left:230px;top:496.2px;width:600px;height:3.8px;background:#3b3b3b;"></div>
<div style="left:230px;top:500.0px;width:600px;height:1px;background:#6c6c6c;"></div>
<div style="left:230px;top:501.0px;width:600px;height:9.8px;background:#3a3a3a;"></div>
<div style="left:293.26px;top:496.2px;width:112.79999999999995px;height:3.8px;background:#3e3f44;"></div>
<div style="left:293.26px;top:501.0px;width:112.79999999999995px;height:9.8px;background:#3c3d42;"></div>
<div style="left:518.86px;top:496.2px;width:112.79999999999995px;height:3.8px;background:#3e3f44;"></div>
<div style="left:518.86px;top:501.0px;width:112.79999999999995px;height:9.8px;background:#3c3d42;"></div>
<div style="left:744.46px;top:496.2px;width:85.53999999999996px;height:3.8px;background:#3e3f44;"></div>
<div style="left:744.46px;top:501.0px;width:85.53999999999996px;height:9.8px;background:#3c3d42;"></div>
<div style="left:230px;top:510.8px;width:600px;height:1.1px;background:#7a7a7a;"></div>
<div style="left:230px;top:511.9px;width:600px;height:1px;background:#7a7a7a;"></div>
<div style="left:230px;top:512.9px;width:600px;height:3.8px;background:#3b3b3b;"></div>
<div style="left:230px;top:516.6999999999999px;width:600px;height:1px;background:#6c6c6c;"></div>
<div style="left:230px;top:517.6999999999999px;width:600px;height:9.8px;background:#3a3a3a;"></div>
<div style="left:293.26px;top:512.9px;width:112.79999999999995px;height:3.8px;background:#3e3f44;"></div>
<div style="left:293.26px;top:517.6999999999999px;width:112.79999999999995px;height:9.8px;background:#3c3d42;"></div>
<div style="left:518.86px;top:512.9px;width:112.79999999999995px;height:3.8px;background:#3e3f44;"></div>
<div style="left:518.86px;top:517.6999999999999px;width:112.79999999999995px;height:9.8px;background:#3c3d42;"></div>
<div style="left:744.46px;top:512.9px;width:85.53999999999996px;height:3.8px;background:#3e3f44;"></div>
<div style="left:744.46px;top:517.6999999999999px;width:85.53999999999996px;height:9.8px;background:#3c3d42;"></div>
<div style="left:230px;top:527.5px;width:600px;height:1.1px;background:#7a7a7a;"></div>
<svg style="left:0px;top:0px;" width="960" height="540" viewBox="0 0 960 540"><path d="M233.1 459.500v2.300" stroke="#8a8a8a" stroke-width=".7"/><path d="M233.1 461.800v16.200" stroke="#404040" stroke-width=".6" opacity=".55"/><path d="M240.6 459.500v2.300" stroke="#8a8a8a" stroke-width=".7"/><path d="M240.6 461.800v16.200" stroke="#404040" stroke-width=".6" opacity=".55"/><path d="M248.1 459.500v2.300" stroke="#8a8a8a" stroke-width=".7"/><path d="M248.1 461.800v16.200" stroke="#404040" stroke-width=".6" opacity=".55"/><path d="M255.7 459.500v2.300" stroke="#8a8a8a" stroke-width=".7"/><path d="M255.7 461.800v16.200" stroke="#404040" stroke-width=".6" opacity=".55"/><path d="M263.2 459.500v2.300" stroke="#8a8a8a" stroke-width=".7"/><path d="M263.2 461.800v16.200" stroke="#404040" stroke-width=".6" opacity=".55"/><path d="M270.7 459.500v2.300" stroke="#8a8a8a" stroke-width=".7"/><path d="M270.7 461.800v16.200" stroke="#404040" stroke-width=".6" opacity=".55"/><path d="M278.2 459.500v2.300" stroke="#8a8a8a" stroke-width=".7"/><path d="M278.2 461.800v16.200" stroke="#404040" stroke-width=".6" opacity=".55"/><path d="M285.7 459.500v2.300" stroke="#8a8a8a" stroke-width=".7"/><path d="M285.7 461.800v16.200" stroke="#404040" stroke-width=".6" opacity=".55"/><path d="M293.3 459.500v2.300" stroke="#8a8a8a" stroke-width=".7"/><path d="M293.3 461.800v16.200" stroke="#404040" stroke-width=".6" opacity=".55"/><path d="M300.8 459.500v2.300" stroke="#8a8a8a" stroke-width=".7"/><path d="M300.8 461.800v16.200" stroke="#404040" stroke-width=".6" opacity=".55"/><path d="M308.3 459.500v2.300" stroke="#8a8a8a" stroke-width=".7"/><path d="M308.3 461.800v16.200" stroke="#404040" stroke-width=".6" opacity=".55"/><path d="M315.8 459.500v2.300" stroke="#8a8a8a" stroke-width=".7"/><path d="M315.8 461.800v16.200" stroke="#404040" stroke-width=".6" opacity=".55"/><path d="M323.3 459.500v2.300" stroke="#8a8a8a" stroke-width=".7"/><path d="M323.3 461.800v16.200" stroke="#404040" stroke-width=".6" opacity=".55"/><path d="M330.9 459.500v2.300" stroke="#8a8a8a" stroke-width=".7"/><path d="M330.9 461.800v16.200" stroke="#404040" stroke-width=".6" opacity=".55"/><path d="M338.4 459.500v2.300" stroke="#8a8a8a" stroke-width=".7"/><path d="M338.4 461.800v16.200" stroke="#404040" stroke-width=".6" opacity=".55"/><path d="M345.9 459.500v2.300" stroke="#8a8a8a" stroke-width=".7"/><path d="M345.9 461.800v16.200" stroke="#404040" stroke-width=".6" opacity=".55"/><path d="M353.4 459.500v2.300" stroke="#8a8a8a" stroke-width=".7"/><path d="M353.4 461.800v16.200" stroke="#404040" stroke-width=".6" opacity=".55"/><path d="M360.9 459.500v2.300" stroke="#8a8a8a" stroke-width=".7"/><path d="M360.9 461.800v16.200" stroke="#404040" stroke-width=".6" opacity=".55"/><path d="M368.5 459.500v2.300" stroke="#8a8a8a" stroke-width=".7"/><path d="M368.5 461.800v16.200" stroke="#404040" stroke-width=".6" opacity=".55"/><path d="M376.0 459.500v2.300" stroke="#8a8a8a" stroke-width=".7"/><path d="M376.0 461.800v16.200" stroke="#404040" stroke-width=".6" opacity=".55"/><path d="M383.5 459.500v2.300" stroke="#8a8a8a" stroke-width=".7"/><path d="M383.5 461.800v16.200" stroke="#404040" stroke-width=".6" opacity=".55"/><path d="M391.0 459.500v2.300" stroke="#8a8a8a" stroke-width=".7"/><path d="M391.0 461.800v16.200" stroke="#404040" stroke-width=".6" opacity=".55"/><path d="M398.5 459.500v2.300" stroke="#8a8a8a" stroke-width=".7"/><path d="M398.5 461.800v16.200" stroke="#404040" stroke-width=".6" opacity=".55"/><path d="M406.1 459.500v2.300" stroke="#8a8a8a" stroke-width=".7"/><path d="M406.1 461.800v16.200" stroke="#404040" stroke-width=".6" opacity=".55"/><path d="M413.6 459.500v2.300" stroke="#8a8a8a" stroke-width=".7"/><path d="M413.6 461.800v16.200" stroke="#404040" stroke-width=".6" opacity=".55"/><path d="M421.1 459.500v2.300" stroke="#8a8a8a" stroke-width=".7"/><path d="M421.1 461.800v16.200" stroke="#404040" stroke-width=".6" opacity=".55"/><path d="M428.6 459.500v2.300" stroke="#8a8a8a" stroke-width=".7"/><path d="M428.6 461.800v16.200" stroke="#404040" stroke-width=".6" opacity=".55"/><path d="M436.1 459.500v2.300" stroke="#8a8a8a" stroke-width=".7"/><path d="M436.1 461.800v16.200" stroke="#404040" stroke-width=".6" opacity=".55"/><path d="M443.7 459.500v2.300" stroke="#8a8a8a" stroke-width=".7"/><path d="M443.7 461.800v16.200" stroke="#404040" stroke-width=".6" opacity=".55"/><path d="M451.2 459.500v2.300" stroke="#8a8a8a" stroke-width=".7"/><path d="M451.2 461.800v16.200" stroke="#404040" stroke-width=".6" opacity=".55"/><path d="M458.7 459.500v2.300" stroke="#8a8a8a" stroke-width=".7"/><path d="M458.7 461.800v16.200" stroke="#404040" stroke-width=".6" opacity=".55"/><path d="M466.2 459.500v2.300" stroke="#8a8a8a" stroke-width=".7"/><path d="M466.2 461.800v16.200" stroke="#404040" stroke-width=".6" opacity=".55"/><path d="M473.7 459.500v2.300" stroke="#8a8a8a" stroke-width=".7"/><path d="M473.7 461.800v16.200" stroke="#404040" stroke-width=".6" opacity=".55"/><path d="M481.3 459.500v2.300" stroke="#8a8a8a" stroke-width=".7"/><path d="M481.3 461.800v16.200" stroke="#404040" stroke-width=".6" opacity=".55"/><path d="M488.8 459.500v2.300" stroke="#8a8a8a" stroke-width=".7"/><path d="M488.8 461.800v16.200" stroke="#404040" stroke-width=".6" opacity=".55"/><path d="M496.3 459.500v2.300" stroke="#8a8a8a" stroke-width=".7"/><path d="M496.3 461.800v16.200" stroke="#404040" stroke-width=".6" opacity=".55"/><path d="M503.8 459.500v2.300" stroke="#8a8a8a" stroke-width=".7"/><path d="M503.8 461.800v16.200" stroke="#404040" stroke-width=".6" opacity=".55"/><path d="M511.3 459.500v2.300" stroke="#8a8a8a" stroke-width=".7"/><path d="M511.3 461.800v16.200" stroke="#404040" stroke-width=".6" opacity=".55"/><path d="M518.9 459.500v2.300" stroke="#8a8a8a" stroke-width=".7"/><path d="M518.9 461.800v16.200" stroke="#404040" stroke-width=".6" opacity=".55"/><path d="M526.4 459.500v2.300" stroke="#8a8a8a" stroke-width=".7"/><path d="M526.4 461.800v16.200" stroke="#404040" stroke-width=".6" opacity=".55"/><path d="M533.9 459.500v2.300" stroke="#8a8a8a" stroke-width=".7"/><path d="M533.9 461.800v16.200" stroke="#404040" stroke-width=".6" opacity=".55"/><path d="M541.4 459.500v2.300" stroke="#8a8a8a" stroke-width=".7"/><path d="M541.4 461.800v16.200" stroke="#404040" stroke-width=".6" opacity=".55"/><path d="M548.9 459.500v2.300" stroke="#8a8a8a" stroke-width=".7"/><path d="M548.9 461.800v16.200" stroke="#404040" stroke-width=".6" opacity=".55"/><path d="M556.5 459.500v2.300" stroke="#8a8a8a" stroke-width=".7"/><path d="M556.5 461.800v16.200" stroke="#404040" stroke-width=".6" opacity=".55"/><path d="M564.0 459.500v2.300" stroke="#8a8a8a" stroke-width=".7"/><path d="M564.0 461.800v16.200" stroke="#404040" stroke-width=".6" opacity=".55"/><path d="M571.5 459.500v2.300" stroke="#8a8a8a" stroke-width=".7"/><path d="M571.5 461.800v16.200" stroke="#404040" stroke-width=".6" opacity=".55"/><path d="M579.0 459.500v2.300" stroke="#8a8a8a" stroke-width=".7"/><path d="M579.0 461.800v16.200" stroke="#404040" stroke-width=".6" opacity=".55"/><path d="M586.5 459.500v2.300" stroke="#8a8a8a" stroke-width=".7"/><path d="M586.5 461.800v16.200" stroke="#404040" stroke-width=".6" opacity=".55"/><path d="M594.1 459.500v2.300" stroke="#8a8a8a" stroke-width=".7"/><path d="M594.1 461.800v16.200" stroke="#404040" stroke-width=".6" opacity=".55"/><path d="M601.6 459.500v2.300" stroke="#8a8a8a" stroke-width=".7"/><path d="M601.6 461.800v16.200" stroke="#404040" stroke-width=".6" opacity=".55"/><path d="M609.1 459.500v2.300" stroke="#8a8a8a" stroke-width=".7"/><path d="M609.1 461.800v16.200" stroke="#404040" stroke-width=".6" opacity=".55"/><path d="M616.6 459.500v2.300" stroke="#8a8a8a" stroke-width=".7"/><path d="M616.6 461.800v16.200" stroke="#404040" stroke-width=".6" opacity=".55"/><path d="M624.1 459.500v2.300" stroke="#8a8a8a" stroke-width=".7"/><path d="M624.1 461.800v16.200" stroke="#404040" stroke-width=".6" opacity=".55"/><path d="M631.7 459.500v2.300" stroke="#8a8a8a" stroke-width=".7"/><path d="M631.7 461.800v16.200" stroke="#404040" stroke-width=".6" opacity=".55"/><path d="M639.2 459.500v2.300" stroke="#8a8a8a" stroke-width=".7"/><path d="M639.2 461.800v16.200" stroke="#404040" stroke-width=".6" opacity=".55"/><path d="M646.7 459.500v2.300" stroke="#8a8a8a" stroke-width=".7"/><path d="M646.7 461.800v16.200" stroke="#404040" stroke-width=".6" opacity=".55"/><path d="M654.2 459.500v2.300" stroke="#8a8a8a" stroke-width=".7"/><path d="M654.2 461.800v16.200" stroke="#404040" stroke-width=".6" opacity=".55"/><path d="M661.7 459.500v2.300" stroke="#8a8a8a" stroke-width=".7"/><path d="M661.7 461.800v16.200" stroke="#404040" stroke-width=".6" opacity=".55"/><path d="M669.3 459.500v2.300" stroke="#8a8a8a" stroke-width=".7"/><path d="M669.3 461.800v16.200" stroke="#404040" stroke-width=".6" opacity=".55"/><path d="M676.8 459.500v2.300" stroke="#8a8a8a" stroke-width=".7"/><path d="M676.8 461.800v16.200" stroke="#404040" stroke-width=".6" opacity=".55"/><path d="M684.3 459.500v2.300" stroke="#8a8a8a" stroke-width=".7"/><path d="M684.3 461.800v16.200" stroke="#404040" stroke-width=".6" opacity=".55"/><path d="M691.8 459.500v2.300" stroke="#8a8a8a" stroke-width=".7"/><path d="M691.8 461.800v16.200" stroke="#404040" stroke-width=".6" opacity=".55"/><path d="M699.3 459.500v2.300" stroke="#8a8a8a" stroke-width=".7"/><path d="M699.3 461.800v16.200" stroke="#404040" stroke-width=".6" opacity=".55"/><path d="M706.9 459.500v2.300" stroke="#8a8a8a" stroke-width=".7"/><path d="M706.9 461.800v16.200" stroke="#404040" stroke-width=".6" opacity=".55"/><path d="M714.4 459.500v2.300" stroke="#8a8a8a" stroke-width=".7"/><path d="M714.4 461.800v16.200" stroke="#404040" stroke-width=".6" opacity=".55"/><path d="M721.9 459.500v2.300" stroke="#8a8a8a" stroke-width=".7"/><path d="M721.9 461.800v16.200" stroke="#404040" stroke-width=".6" opacity=".55"/><path d="M729.4 459.500v2.300" stroke="#8a8a8a" stroke-width=".7"/><path d="M729.4 461.800v16.200" stroke="#404040" stroke-width=".6" opacity=".55"/><path d="M736.9 459.500v2.300" stroke="#8a8a8a" stroke-width=".7"/><path d="M736.9 461.800v16.200" stroke="#404040" stroke-width=".6" opacity=".55"/><path d="M744.5 459.500v2.300" stroke="#8a8a8a" stroke-width=".7"/><path d="M744.5 461.800v16.200" stroke="#404040" stroke-width=".6" opacity=".55"/><path d="M752.0 459.500v2.300" stroke="#8a8a8a" stroke-width=".7"/><path d="M752.0 461.800v16.200" stroke="#404040" stroke-width=".6" opacity=".55"/><path d="M759.5 459.500v2.300" stroke="#8a8a8a" stroke-width=".7"/><path d="M759.5 461.800v16.200" stroke="#404040" stroke-width=".6" opacity=".55"/><path d="M767.0 459.500v2.300" stroke="#8a8a8a" stroke-width=".7"/><path d="M767.0 461.800v16.200" stroke="#404040" stroke-width=".6" opacity=".55"/><path d="M774.5 459.500v2.300" stroke="#8a8a8a" stroke-width=".7"/><path d="M774.5 461.800v16.200" stroke="#404040" stroke-width=".6" opacity=".55"/><path d="M782.1 459.500v2.300" stroke="#8a8a8a" stroke-width=".7"/><path d="M782.1 461.800v16.200" stroke="#404040" stroke-width=".6" opacity=".55"/><path d="M789.6 459.500v2.300" stroke="#8a8a8a" stroke-width=".7"/><path d="M789.6 461.800v16.200" stroke="#404040" stroke-width=".6" opacity=".55"/><path d="M797.1 459.500v2.300" stroke="#8a8a8a" stroke-width=".7"/><path d="M797.1 461.800v16.200" stroke="#404040" stroke-width=".6" opacity=".55"/><path d="M804.6 459.500v2.300" stroke="#8a8a8a" stroke-width=".7"/><path d="M804.6 461.800v16.200" stroke="#404040" stroke-width=".6" opacity=".55"/><path d="M812.1 459.500v2.300" stroke="#8a8a8a" stroke-width=".7"/><path d="M812.1 461.800v16.200" stroke="#404040" stroke-width=".6" opacity=".55"/><path d="M819.7 459.500v2.300" stroke="#8a8a8a" stroke-width=".7"/><path d="M819.7 461.800v16.200" stroke="#404040" stroke-width=".6" opacity=".55"/><path d="M827.2 459.500v2.300" stroke="#8a8a8a" stroke-width=".7"/><path d="M827.2 461.800v16.200" stroke="#404040" stroke-width=".6" opacity=".55"/><path d="M240.6 496.2v14.600" stroke="#d0d0d0" stroke-width="1"/><path d="M238.4 496.2v3.800M239.4 496.2v3.800M242.4 496.2v3.800M244.6 496.2v3.800" stroke="#a8a8a8" stroke-width=".8"/><path d="M263.2 479.5v14.600" stroke="#d0d0d0" stroke-width="1"/><path d="M261.0 479.5v3.800M262.0 479.5v3.800M265.0 479.5v3.800M267.2 479.5v3.800" stroke="#a8a8a8" stroke-width=".8"/><path d="M300.8 479.5v14.600" stroke="#d0d0d0" stroke-width="1"/><path d="M298.6 479.5v3.800M299.6 479.5v3.800M302.6 479.5v3.800M304.8 479.5v3.800" stroke="#a8a8a8" stroke-width=".8"/><path d="M300.8 496.2v14.600" stroke="#d0d0d0" stroke-width="1"/><path d="M298.6 496.2v3.800M299.6 496.2v3.800M302.6 496.2v3.800M304.8 496.2v3.800" stroke="#a8a8a8" stroke-width=".8"/><path d="M300.8 512.9v14.600" stroke="#d0d0d0" stroke-width="1"/><path d="M298.6 512.9v3.800M299.6 512.9v3.800M302.6 512.9v3.800M304.8 512.9v3.800" stroke="#a8a8a8" stroke-width=".8"/><path d="M518.9 479.5v14.600" stroke="#d0d0d0" stroke-width="1"/><path d="M516.7 479.5v3.800M517.7 479.5v3.800M520.7 479.5v3.800M522.9 479.5v3.800" stroke="#a8a8a8" stroke-width=".8"/><path d="M518.9 496.2v14.600" stroke="#d0d0d0" stroke-width="1"/><path d="M516.7 496.2v3.800M517.7 496.2v3.800M520.7 496.2v3.800M522.9 496.2v3.800" stroke="#a8a8a8" stroke-width=".8"/><path d="M744.5 479.5v14.600" stroke="#d0d0d0" stroke-width="1"/><path d="M742.3 479.5v3.800M743.3 479.5v3.800M746.3 479.5v3.800M748.5 479.5v3.800" stroke="#a8a8a8" stroke-width=".8"/><path d="M744.5 496.2v14.600" stroke="#d0d0d0" stroke-width="1"/><path d="M742.3 496.2v3.800M743.3 496.2v3.800M746.3 496.2v3.800M748.5 496.2v3.800" stroke="#a8a8a8" stroke-width=".8"/><path d="M744.5 512.9v14.600" stroke="#d0d0d0" stroke-width="1"/><path d="M742.3 512.9v3.800M743.3 512.9v3.800M746.3 512.9v3.800M748.5 512.9v3.800" stroke="#a8a8a8" stroke-width=".8"/><rect x="759.5" y="445.500" width="7.52" height="16.300" fill="#cc2c30" opacity=".95"/><rect x="759.5" y="461.800" width="7.52" height="69.800" fill="#c02830" opacity=".72"/></svg>
<span class="t" style="left:271.0px;top:453px;font-size:7px;line-height:9px;color:#d8d8d8;transform:scaleX(0.88);">73</span>
<span class="t" style="left:316.12px;top:453px;font-size:7px;line-height:9px;color:#d8d8d8;transform:scaleX(0.88);">79</span>
<span class="t" style="left:361.24px;top:453px;font-size:7px;line-height:9px;color:#d8d8d8;transform:scaleX(0.88);">85</span>
<span class="t" style="left:406.35999999999996px;top:453px;font-size:7px;line-height:9px;color:#d8d8d8;transform:scaleX(0.88);">91</span>
<span class="t" style="left:451.47999999999996px;top:453px;font-size:7px;line-height:9px;color:#d8d8d8;transform:scaleX(0.88);">97</span>
<span class="t" style="left:496.59999999999997px;top:453px;font-size:7px;line-height:9px;color:#d8d8d8;transform:scaleX(0.88);">103</span>
<span class="t" style="left:541.7199999999999px;top:453px;font-size:7px;line-height:9px;color:#d8d8d8;transform:scaleX(0.88);">109</span>
<span class="t" style="left:586.8399999999999px;top:453px;font-size:7px;line-height:9px;color:#d8d8d8;transform:scaleX(0.88);">115</span>
<span class="t" style="left:631.9599999999999px;top:453px;font-size:7px;line-height:9px;color:#d8d8d8;transform:scaleX(0.88);">121</span>
<span class="t" style="left:677.0799999999999px;top:453px;font-size:7px;line-height:9px;color:#d8d8d8;transform:scaleX(0.88);">127</span>
<span class="t" style="left:722.1999999999999px;top:453px;font-size:7px;line-height:9px;color:#d8d8d8;transform:scaleX(0.88);">133</span>
<span class="t" style="left:767.3199999999999px;top:453px;font-size:7px;line-height:9px;color:#d8d8d8;transform:scaleX(0.88);">139</span>
<span class="t" style="left:812.4399999999998px;top:453px;font-size:7px;line-height:9px;color:#d8d8d8;transform:scaleX(0.88);">145</span>
<div style="left:230px;top:453px;width:6px;height:9px;"><span class="t" style="left:-4.400px;top:0;font-size:7px;line-height:9px;color:#d8d8d8;transform:scaleX(.88);transform-origin:0 50%;">67</span></div>
<span class="t" style="left:295.06px;top:445px;font-size:6.5px;line-height:8.5px;color:#d8d8d8;transform:scaleX(0.9);">5</span>
<span class="t" style="left:407.85999999999996px;top:445px;font-size:6.5px;line-height:8.5px;color:#d8d8d8;transform:scaleX(0.9);">6</span>
<span class="t" style="left:520.66px;top:445px;font-size:6.5px;line-height:8.5px;color:#d8d8d8;transform:scaleX(0.9);">7</span>
<span class="t" style="left:633.4599999999999px;top:445px;font-size:6.5px;line-height:8.5px;color:#d8d8d8;transform:scaleX(0.9);">8</span>
<span class="t" style="left:746.26px;top:445px;font-size:6.5px;line-height:8.5px;color:#d8d8d8;transform:scaleX(0.9);">9</span>
<span class="t" style="left:760.3px;top:445px;font-size:6.5px;line-height:8.5px;color:#ffffff;transform:scaleX(0.88);font-weight:bold;">138</span>
<span class="t" style="left:230.3px;top:484.1px;font-size:8px;line-height:10px;color:#d4d4d4;transform:scaleX(0.8);">Layer 10b</span>
<span class="t" style="left:264.18px;top:484.1px;font-size:8px;line-height:10px;color:#d4d4d4;transform:scaleX(0.8);">Layer 10a</span>
<span class="t" style="left:301.78px;top:484.1px;font-size:8px;line-height:10px;color:#d4d4d4;transform:scaleX(0.8);">Layer 13</span>
<span class="t" style="left:519.86px;top:484.1px;font-size:8px;line-height:10px;color:#d4d4d4;transform:scaleX(0.8);">Layer 13a</span>
<span class="t" style="left:745.46px;top:484.1px;font-size:8px;line-height:10px;color:#d4d4d4;transform:scaleX(0.8);">Layer 13b</span>
<span class="t" style="left:230.3px;top:500.8px;font-size:8px;line-height:10px;color:#d4d4d4;transform:scaleX(0.8);">1:4</span>
<span class="t" style="left:241.62px;top:500.8px;font-size:8px;line-height:10px;color:#d4d4d4;transform:scaleX(0.8);">1:5</span>
<span class="t" style="left:301.78px;top:500.8px;font-size:8px;line-height:10px;color:#d4d4d4;transform:scaleX(0.8);">1:6</span>
<span class="t" style="left:519.86px;top:500.8px;font-size:8px;line-height:10px;color:#d4d4d4;transform:scaleX(0.8);">1:7</span>
<span class="t" style="left:745.46px;top:500.8px;font-size:8px;line-height:10px;color:#d4d4d4;transform:scaleX(0.8);">1:8</span>
<span class="t" style="left:230.3px;top:517.5px;font-size:8px;line-height:10px;color:#d4d4d4;transform:scaleX(0.8);">3</span>
<span class="t" style="left:301.78px;top:517.5px;font-size:8px;line-height:10px;color:#d4d4d4;transform:scaleX(0.8);">4</span>
<span class="t" style="left:745.46px;top:517.5px;font-size:8px;line-height:10px;color:#d4d4d4;transform:scaleX(0.8);">5</span>
<div style="left:230px;top:531.7px;width:600px;height:8.3px;background:#404040;"></div>
<div style="left:230px;top:531.7px;width:8px;height:8.3px;background:#565656;"></div>
<div style="left:822.5px;top:531.7px;width:7.5px;height:8.3px;background:#565656;"></div>
<div style="left:244.5px;top:532.5px;width:7px;height:7px;background:#5e5e5e;border-radius:50%;"></div>
<svg style="left:0px;top:0px;" width="960" height="540" viewBox="0 0 960 540"><path class="ic" style="stroke:#a8a8a8;stroke-width:.9" d="M235 534.300l-1.700 1.700l1.700 1.700M825.300 534.300l1.700 1.700l-1.700 1.700"/></svg>
<div style="left:830px;top:461.8px;width:8px;height:70px;background:#444;"></div>
<div style="left:831.5px;top:470px;width:5px;height:38px;background:#5a5a5a;border-radius:2.500px;"></div>
<svg style="left:830px;top:461.8px;" width="8" height="70" viewBox="0 0 8 70"><rect x="0" y="0" width="8" height="7" fill="#565656"/><rect x="0" y="63" width="8" height="7" fill="#565656"/><path class="ic" style="stroke:#a8a8a8;stroke-width:.9" d="M2.500 4.500l1.500-1.500l1.500 1.500M2.500 65.500l1.500 1.500l1.500-1.500"/></svg>
<div style="left:143px;top:461.8px;width:12.3px;height:16px;background:#4a4a4a;"></div>
<div style="left:156px;top:461.8px;width:72.5px;height:16px;background:#5a6178;"></div>
<div style="left:143px;top:478.5px;width:12.3px;height:16px;background:#4a4a4a;"></div>
<div style="left:156px;top:478.5px;width:72.5px;height:16px;background:#484848;"></div>
<div style="left:143px;top:495.2px;width:12.3px;height:16px;background:#4a4a4a;"></div>
<div style="left:156px;top:495.2px;width:72.5px;height:16px;background:#484848;"></div>
<div style="left:143px;top:511.9px;width:12.3px;height:16px;background:#4a4a4a;"></div>
<div style="left:156px;top:511.9px;width:72.5px;height:16px;background:#484848;"></div>
<div style="left:143px;top:528.6px;width:12.3px;height:12px;background:#4a4a4a;"></div>
<div style="left:156px;top:528.6px;width:72.5px;height:12px;background:#484848;"></div>
<svg style="left:0px;top:0px;" width="960" height="540" viewBox="0 0 960 540"><path d="M144.800 469.8c2-3.400 7-3.400 9 0c-2 3.400-7 3.400-9 0z" fill="none" stroke="#7e7e7e" stroke-width="1"/><circle cx="149.300" cy="469.8" r="1.800" fill="#7e7e7e"/><rect x="158.800" y="466.6" width="8" height="8" rx="1" fill="none" stroke="#b8b8b8" stroke-width="1"/><rect x="160.800" y="464.8" width="8" height="8" rx="1" fill="#8a8a8a" stroke="#b8b8b8" stroke-width="1"/><rect x="172.600" y="466.5" width="6.600" height="6.600" fill="#5a5a5a" stroke="#b0b0b0" stroke-width=".8"/><path d="M173.600 469.8h4.600M175.900 467.5v4.600" stroke="#e0e0e0" stroke-width=".9"/><path d="M144.800 486.5c2-3.400 7-3.400 9 0c-2 3.400-7 3.400-9 0z" fill="none" stroke="#ececec" stroke-width="1"/><circle cx="149.300" cy="486.5" r="1.800" fill="#ececec"/><rect x="158.800" y="483.3" width="8" height="8" rx="1" fill="none" stroke="#b8b8b8" stroke-width="1"/><rect x="160.800" y="481.5" width="8" height="8" rx="1" fill="#8a8a8a" stroke="#b8b8b8" stroke-width="1"/><rect x="172.600" y="483.2" width="6.600" height="6.600" fill="#5a5a5a" stroke="#b0b0b0" stroke-width=".8"/><path d="M173.600 486.5h4.600M175.900 484.2v4.600" stroke="#e0e0e0" stroke-width=".9"/><path d="M144.800 503.2c2-3.400 7-3.400 9 0c-2 3.400-7 3.400-9 0z" fill="none" stroke="#ececec" stroke-width="1"/><circle cx="149.300" cy="503.2" r="1.800" fill="#ececec"/><rect x="158.800" y="500.0" width="8" height="8" rx="1" fill="none" stroke="#b8b8b8" stroke-width="1"/><rect x="160.800" y="498.2" width="8" height="8" rx="1" fill="#8a8a8a" stroke="#b8b8b8" stroke-width="1"/><rect x="172.600" y="499.9" width="6.600" height="6.600" fill="#5a5a5a" stroke="#b0b0b0" stroke-width=".8"/><path d="M173.600 503.2h4.600M175.900 500.9v4.600" stroke="#e0e0e0" stroke-width=".9"/><path d="M144.800 519.9c2-3.400 7-3.400 9 0c-2 3.400-7 3.400-9 0z" fill="none" stroke="#ececec" stroke-width="1"/><circle cx="149.300" cy="519.9" r="1.800" fill="#ececec"/><rect x="158.800" y="516.6999999999999" width="8" height="8" rx="1" fill="none" stroke="#b8b8b8" stroke-width="1"/><rect x="160.800" y="514.9" width="8" height="8" rx="1" fill="#8a8a8a" stroke="#b8b8b8" stroke-width="1"/><rect x="172.600" y="516.6" width="6.600" height="6.600" fill="#5a5a5a" stroke="#b0b0b0" stroke-width=".8"/><path d="M173.600 519.9h4.600M175.900 517.6v4.600" stroke="#e0e0e0" stroke-width=".9"/><rect x="146" y="534.1" width="6.300" height="6.300" fill="#424242" stroke="#5c5c5c" stroke-width=".7"/><rect x="159.500" y="532.6" width="9" height="8" rx="1" fill="none" stroke="#d0d0d0" stroke-width="1"/><path d="M160.500 539.6l2.500-3l2 2l1.500-1.500l1.500 2.500z" fill="#d0d0d0"/><rect x="172.600" y="533.3000000000001" width="6.600" height="6.600" fill="#5a5a5a" stroke="#b0b0b0" stroke-width=".8"/><path d="M173.600 536.6h4.600M175.900 534.3000000000001v4.600" stroke="#e0e0e0" stroke-width=".9"/><path class="ic" style="stroke:#8e8e8e" d="M134 518l2.300 2.300l2.300-2.300M134 530.500l2.300 2.300l2.300-2.300M134 533.500l2.300 2.300l2.300-2.300"/></svg>
<div style="left:181px;top:461.8px;width:47.5px;height:16px;"><span class="t" style="left:1px;top:3px;font-size:8px;line-height:10px;color:#c4c8d4;transform:scaleX(0.64);transform-origin:0 50%;">Personajes rough : 2</span></div>
<div style="left:181px;top:478.5px;width:47.5px;height:16px;"><span class="t" style="left:1px;top:3px;font-size:8px;line-height:10px;color:#e0e0e0;transform:scaleX(0.8);transform-origin:0 50%;">Props : 139 : cel</span></div>
<div style="left:181px;top:495.2px;width:47.5px;height:16px;"><span class="t" style="left:1px;top:3px;font-size:8px;line-height:10px;color:#d8d8d8;transform:scaleX(0.61);transform-origin:0 50%;">Esqueletos : 391 : cel</span></div>
<div style="left:181px;top:511.9px;width:47.5px;height:16px;"><span class="t" style="left:1px;top:3px;font-size:8px;line-height:10px;color:#d8d8d8;transform:scaleX(0.62);transform-origin:0 50%;">Backgrounds : 196 : c</span></div>
<div style="left:181px;top:528.6px;width:47.5px;height:11.399999999999977px;"><span class="t" style="left:1px;top:3px;font-size:8px;line-height:10px;color:#c81818;transform:scaleX(0.8);transform-origin:0 50%;">1 point grid :</span></div>
<div style="left:838px;top:30px;width:122px;height:15px;background:#343434;"></div>
<svg style="left:838px;top:30px;" width="122" height="15" viewBox="0 0 122 15"><path class="ic" style="stroke:#808080;stroke-width:.9" d="M4.500 5.500l-2 2l2 2M7.500 5.500l-2 2l2 2M101.500 5.500l2 2l-2 2M115.500 5.500l2 2l-2 2M118.500 5.500l2 2l-2 2"/><path d="M12.800 3.500v8.500M15.200 3.500v8.500" stroke="#5a5a5a" stroke-width=".8" fill="none"/></svg>
<div style="left:848.3px;top:44px;width:111.70000000000005px;height:10.5px;background:#343434;"></div>
<div style="left:848.3px;top:44px;width:11.2px;height:9.5px;background:#383838;"></div>
<div style="left:860px;top:44px;width:42px;height:11.5px;background:#484848;"></div>
<div style="left:903px;top:44px;width:17.700000000000045px;height:10.0px;background:#414141;"></div>
<div style="left:921.7px;top:44px;width:17.799999999999955px;height:10.0px;background:#414141;"></div>
<div style="left:940.5px;top:44px;width:19.5px;height:10.0px;background:#414141;"></div>
<div style="left:848.3px;top:54.5px;width:111.70000000000005px;height:2px;background:#484848;"></div>
<svg style="left:848.3px;top:44px;" width="12" height="12" viewBox="0 0 12 12"><path d="M3 3.500h4M3 5.500h4M3 7.500h4" stroke="#626262" stroke-width="1" fill="none"/></svg>
<svg style="left:860px;top:44px;" width="100" height="12" viewBox="0 0 100 12"><rect class="ic" x="5.500" y="3" width="7.500" height="6" rx="1"/><rect x="7" y="4.500" width="4.500" height="3" fill="#b0b0b0"/><path class="ic" d="M4 5v5.500h7"/><path class="icd" style="stroke:#7c7c7c" d="M49 3h7.500v6h-3l-1.500 1.500l-1-1.500h-2z"/><path class="icd" style="stroke:#7c7c7c" d="M67.500 10a4 4 0 0 1 8 0M69.500 10l2-3l2 3"/><circle class="icd" style="stroke:#7c7c7c" cx="90" cy="8" r="4.300"/><path class="icd" style="stroke:#7c7c7c" d="M90 5.500v4"/></svg>
<span class="t" style="left:877.800px;top:46.300px;font-size:7px;line-height:9px;transform:scaleX(.88);background:linear-gradient(to right,#e0e0e0 55%,#5a5a5a 100%);-webkit-background-clip:text;background-clip:text;color:transparent;">Navigat</span>
<div style="left:848.3px;top:57px;width:111.70000000000005px;height:135px;background:#2c2c2c;"></div>
<div style="left:848.3px;top:79px;width:111.70000000000005px;height:2px;background:#b41616;"></div>
<div style="left:848.3px;top:160px;width:111.70000000000005px;height:2px;background:#b41616;"></div>
<div style="left:848.8px;top:93.3px;width:110.7px;height:62.5px;background:#bebebe;"></div>
<svg style="left:848.800px;top:93.300px;overflow:hidden" width="110.700" height="62.500" viewBox="236 119 481 271" preserveAspectRatio="none"><path class="mg" style="stroke-width:4.56" d="M237.800 120L238 390"/><path class="mg" style="stroke-width:3.23" d="M239.600 120L239.300 300L238.300 390"/><path class="mg" style="stroke-width:1.33" d="M240.500 121L240.300 200"/><path class="mg" style="stroke-width:3.80" d="M716 119.500L716.300 390"/><path class="mg" style="stroke-width:1.90" d="M714.600 120L715 250L714.800 390"/><path class="mg" style="stroke-width:2.47" d="M349.500 119.500L348.800 260L350.500 390"/><path class="mg" style="stroke-width:1.52" d="M351 121L350 250L351.800 389"/><path class="mg" style="stroke-width:0.95" d="M347.500 140L347 250L349 330"/><path class="mg" style="stroke-width:1.71" d="M350 119.500L376 166"/><path class="mg" style="stroke-width:1.14" d="M352 120L375 162"/><path class="mg" style="stroke-width:0.95" d="M354 119.500L377 164"/><path class="mg" style="stroke-width:1.90" d="M376 166L378.600 250L382 390"/><path class="mg" style="stroke-width:1.14" d="M375 168L377 250L379 300"/><path class="mg" style="stroke-width:1.71" d="M376 166.300L446 163L520 164.500L568 166.600"/><path class="mg" style="stroke-width:0.95" d="M380 167L446 164L530 165"/><path class="mg" style="stroke-width:1.14" d="M412 170L470 167.500L526 166.500"/><path class="mg" style="stroke-width:1.90" d="M575 166L575.600 280L576.500 390"/><path class="mg" style="stroke-width:0.95" d="M574.500 168L575 300"/><path class="mg" style="stroke-width:1.52" d="M575 166L606 119.500"/><path class="mg" style="stroke-width:1.14" d="M577 166.500L608 120"/><path class="mg" style="stroke-width:0.95" d="M579 163L603 125"/><path class="mg" style="stroke-width:2.47" d="M608.500 119.500L610 260L613.500 390"/><path class="mg" style="stroke-width:1.71" d="M611.500 120L612 250L615.500 390"/><path class="mg" style="stroke-width:1.14" d="M610 119.500L611 200L609 320L608 326"/><path class="bl" style="stroke-width:3.09" d="M441.300 219C440.500 205 440.500 190 442 178C444 160 458 146 484 143.500C508 142 523 155 526.500 175C528.500 190 528.500 205 528 216.500"/><path class="bl" style="stroke-width:1.39;opacity:.7" transform="translate(.8 .5)" d="M441.300 219C440.500 205 440.500 190 442 178C444 160 458 146 484 143.500C508 142 523 155 526.500 175C528.500 190 528.500 205 528 216.500"/><path class="bl" style="stroke-width:1.66" d="M442.500 215C442 200 442.500 186 444 177C447 161 460 148 483 145.500"/><path class="bl" style="stroke-width:1.66" d="M525 172C527 186 527.500 202 527 214"/><path class="bl" style="stroke-width:2.61" d="M441.300 213C455 208 470 206.500 485 206.500C500 206.500 515 208 527.800 210.500"/><path class="bl" style="stroke-width:1.18;opacity:.7" transform="translate(.8 .5)" d="M441.300 213C455 208 470 206.500 485 206.500C500 206.500 515 208 527.800 210.500"/><path class="bl" style="stroke-width:3.09" d="M441.300 219C446 227 462 231 483 231C505 231 522 226 528 216.500"/><path class="bl" style="stroke-width:1.39;opacity:.7" transform="translate(.8 .5)" d="M441.300 219C446 227 462 231 483 231C505 231 522 226 528 216.500"/><path class="bl" style="stroke-width:1.66" d="M444 222C452 228 466 230 480 230.500"/><path class="bl" style="stroke-width:2.85" d="M475.500 217.500L477 237.500M493.500 217L491.500 237M475.500 217.500C481 216 488 216 493.500 217M477 235C482 236 487 236 491.500 235"/><path class="bl" style="stroke-width:1.28;opacity:.7" transform="translate(.8 .5)" d="M475.500 217.500L477 237.500M493.500 217L491.500 237M475.500 217.500C481 216 488 216 493.500 217M477 235C482 236 487 236 491.500 235"/><path class="bl" style="stroke-width:2.38" d="M483 155C484 150 492 148.500 500 150.500C507 152.500 509 159 505.500 165C503 168 499.500 166.500 499 162.500C498.500 158 494 155 489 155.500C486 156 484 157 483 155z"/><path class="bl" style="stroke-width:1.07;opacity:.7" transform="translate(.8 .5)" d="M483 155C484 150 492 148.500 500 150.500C507 152.500 509 159 505.500 165C503 168 499.500 166.500 499 162.500C498.500 158 494 155 489 155.500C486 156 484 157 483 155z"/><path class="bl" style="stroke-width:2.14" d="M516.500 174A3.800 3.800 0 1 1 508.900 174A3.800 3.800 0 1 1 516.500 174M515.500 175A3 3 0 1 1 510 173"/><path class="bl" style="stroke-width:3.80" d="M437 239.500L480 238.300L536 236.800"/><path class="bl" style="stroke-width:1.71;opacity:.7" transform="translate(.8 .5)" d="M437 239.500L480 238.300L536 236.800"/><path class="bl" style="stroke-width:1.90" d="M436 241L476 240"/><path class="bl" style="stroke-width:2.61" d="M401.800 229.200L435 228.300L440 229L440 238M401.800 229.200L408.600 258.500L433.800 257.400L436 229M403.500 231L434 230"/><path class="bl" style="stroke-width:1.18;opacity:.7" transform="translate(.8 .5)" d="M401.800 229.200L435 228.300L440 229L440 238M401.800 229.200L408.600 258.500L433.800 257.400L436 229M403.500 231L434 230"/><path class="bl" style="stroke-width:1.42" d="M404 232L410 257M432 231L431 256"/><path class="bl" style="stroke-width:4.75" d="M427.300 244.800A7.300 7.300 0 1 1 412.700 244.800A7.300 7.300 0 1 1 427.300 244.800"/><path class="bl" style="stroke-width:2.14;opacity:.7" transform="translate(.8 .5)" d="M427.300 244.800A7.300 7.300 0 1 1 412.700 244.800A7.300 7.300 0 1 1 427.300 244.800"/><path class="bl" style="stroke-width:1.90" d="M425.500 245.500A5.800 5.800 0 1 1 413.900 244.300"/><path class="bl" style="stroke-width:2.61" d="M536 249.500C535.500 240 540 230 547 227C555 224 566 228 569 238C570.500 245 570 252 568.500 256C567 261 563.500 261 561 258.500C558 256 553 257.500 549 259.500C545 262 540 263 538 259C536.500 256 536 252 536 249.500"/><path class="bl" style="stroke-width:1.18;opacity:.7" transform="translate(.8 .5)" d="M536 249.500C535.500 240 540 230 547 227C555 224 566 228 569 238C570.500 245 570 252 568.500 256C567 261 563.500 261 561 258.500C558 256 553 257.500 549 259.500C545 262 540 263 538 259C536.500 256 536 252 536 249.500"/><path class="bl" style="stroke-width:1.42" d="M538 246C538 238 543 230 550 228.500"/><path class="bl" style="stroke-width:4.75" d="M558 246A7.300 7.300 0 1 1 543.400 246A7.300 7.300 0 1 1 558 246"/><path class="bl" style="stroke-width:2.14;opacity:.7" transform="translate(.8 .5)" d="M558 246A7.300 7.300 0 1 1 543.400 246A7.300 7.300 0 1 1 558 246"/><path class="bl" style="stroke-width:1.90" d="M556.300 246.700A5.800 5.800 0 1 1 544.700 245.500"/><path class="bl" style="stroke-width:3.56" d="M437 240C443 256 448 272 450 284C451 296 451 308 451.600 320.500L517 319.500C517.500 308 518.500 296 519.600 284C521 272 527 256 535.300 238"/><path class="bl" style="stroke-width:1.60;opacity:.7" transform="translate(.8 .5)" d="M437 240C443 256 448 272 450 284C451 296 451 308 451.600 320.500L517 319.500C517.500 308 518.500 296 519.600 284C521 272 527 256 535.300 238"/><path class="bl" style="stroke-width:1.66" d="M439.500 243C445 258 449.500 274 451.500 286C452.500 298 452.500 308 453 318M533 242C526 258 522.500 274 521 286C520 298 519 308 518.500 317"/><path class="bl" style="stroke-width:1.66" d="M452 323L516 321.500"/><path class="bl" style="stroke-width:3.09" d="M452 247.400L487 246L520.600 245.800M452 247.400C455 256 458 265 460.400 272.800C462.500 284 463.500 296 464.700 306.600L503.700 305.500C505.500 294 507.500 283 510 272.800C513 263 517 254 520.600 245.800"/><path class="bl" style="stroke-width:1.39;opacity:.7" transform="translate(.8 .5)" d="M452 247.400L487 246L520.600 245.800M452 247.400C455 256 458 265 460.400 272.800C462.500 284 463.500 296 464.700 306.600L503.700 305.500C505.500 294 507.500 283 510 272.800C513 263 517 254 520.600 245.800"/><path class="bl" style="stroke-width:1.66" d="M454 249.500L519 247.800M466 305L503 303.800M453.500 250C457 262 460 272 462 282"/><path class="bl" style="stroke-width:1.90" d="M470 248.500L498.400 270.700M488 246.400L510 264.300M502.700 247.400L514.300 257M458.300 254.800L496.300 287.600M462.600 271.700L500.600 302.300M464.700 283.300L491 304.400M466.800 293.900L479.400 303.400M478 247.500L497 263M499.500 275L506 281"/><path class="bl" style="stroke-width:3.80" d="M500 260.500C497.800 261.500 497.600 266 498.300 270L498.300 284C497.300 288 497 291.500 499.300 292.300C501.800 292.300 502.300 289 501.600 285L502 268C502.800 264 502.300 261 500 260.500M500 262.500L500 290.500M499 265L499.300 289M501 264L500.800 288"/><path class="bl" style="stroke-width:1.71;opacity:.7" transform="translate(.8 .5)" d="M500 260.500C497.800 261.500 497.600 266 498.300 270L498.300 284C497.300 288 497 291.500 499.300 292.300C501.800 292.300 502.300 289 501.600 285L502 268C502.800 264 502.300 261 500 260.500M500 262.500L500 290.500M499 265L499.300 289M501 264L500.800 288"/><path class="bl" style="stroke-width:2.38" d="M413.200 260L416 295L418.300 321.400M429.800 260L429 295L428.600 321M415.500 262L419.500 320M421 262L423 318"/><path class="bl" style="stroke-width:1.07;opacity:.7" transform="translate(.8 .5)" d="M413.200 260L416 295L418.300 321.400M429.800 260L429 295L428.600 321M415.500 262L419.500 320M421 262L423 318"/><path class="bl" style="stroke-width:2.38" d="M412 324C412 322 436.700 321.500 436.700 323.500L436.700 332.500C436.700 334.500 412 335 412 333zM415.500 323.500C414 326 414 331 415.500 334M433 323C435 326 435 331 433.500 333.500"/><path class="bl" style="stroke-width:1.07;opacity:.7" transform="translate(.8 .5)" d="M412 324C412 322 436.700 321.500 436.700 323.500L436.700 332.500C436.700 334.500 412 335 412 333zM415.500 323.500C414 326 414 331 415.500 334M433 323C435 326 435 331 433.500 333.500"/><path class="bl" style="stroke-width:2.38" d="M414.500 335L415.500 365L417 390M435 335L434 365L432.400 390M419 336L421 390M429 336L428 390"/><path class="bl" style="stroke-width:1.07;opacity:.7" transform="translate(.8 .5)" d="M414.500 335L415.500 365L417 390M435 335L434 365L432.400 390M419 336L421 390M429 336L428 390"/><path class="bl" style="stroke-width:2.38" d="M542.300 262.700L543 295L543.600 321.400M557.600 260L557 295L556.300 321M544.500 265L546 320"/><path class="bl" style="stroke-width:1.07;opacity:.7" transform="translate(.8 .5)" d="M542.300 262.700L543 295L543.600 321.400M557.600 260L557 295L556.300 321M544.500 265L546 320"/><path class="bl" style="stroke-width:2.38" d="M539.700 324C539.700 322 561.400 321.500 561.400 323.500L561.400 332C561.400 334 539.700 334.500 539.700 332.500zM543 323.500C541.500 326 541.500 331 543 333.500M558 323C559.800 326 559.800 330 558.300 333"/><path class="bl" style="stroke-width:1.07;opacity:.7" transform="translate(.8 .5)" d="M539.700 324C539.700 322 561.400 321.500 561.400 323.500L561.400 332C561.400 334 539.700 334.500 539.700 332.500zM543 323.500C541.500 326 541.500 331 543 333.500M558 323C559.800 326 559.800 330 558.300 333"/><path class="bl" style="stroke-width:2.38" d="M539.700 335L540.500 365L542.300 390M560.200 335L559 365L557.600 390M545 336L546 390"/><path class="bl" style="stroke-width:1.07;opacity:.7" transform="translate(.8 .5)" d="M539.700 335L540.500 365L542.300 390M560.200 335L559 365L557.600 390M545 336L546 390"/><path class="bl" style="stroke-width:2.38" d="M470.700 322.500L470.700 331.500L492.400 331.500L492.400 322M468 323L468 331M495 322.500L495 330.500"/><path class="bl" style="stroke-width:1.07;opacity:.7" transform="translate(.8 .5)" d="M470.700 322.500L470.700 331.500L492.400 331.500L492.400 322M468 323L468 331M495 322.500L495 330.500"/><path class="bl" style="stroke-width:2.38" d="M452.800 331.700C451 340 451 350 451.500 357C452 370 454 380 455.400 390M456 336C455 348 455.500 366 458.500 390"/><path class="bl" style="stroke-width:1.07;opacity:.7" transform="translate(.8 .5)" d="M452.800 331.700C451 340 451 350 451.500 357C452 370 454 380 455.400 390M456 336C455 348 455.500 366 458.500 390"/><path class="bl" style="stroke-width:2.38" d="M461.800 334C461.500 342 463.500 349 468 350.800C472 351.500 475 348.500 475.800 345.700C474 352 472.500 360 472 367.400L472 390M465 336C465.500 342 467 346 470 347.500"/><path class="bl" style="stroke-width:1.07;opacity:.7" transform="translate(.8 .5)" d="M461.800 334C461.500 342 463.500 349 468 350.800C472 351.500 475 348.500 475.800 345.700C474 352 472.500 360 472 367.400L472 390M465 336C465.500 342 467 346 470 347.500"/><path class="bl" style="stroke-width:1.90" d="M475.800 345.700L469.500 344.400M491 344.400L484.500 345.700"/><path class="bl" style="stroke-width:2.38" d="M506.500 334C507 342 504 349 498.800 350.800C495 351.500 492 348.500 491 345C493.500 352 497.500 360 498.800 367.400L498.800 390M503 336C502.500 342 500.500 346 497.500 347.500"/><path class="bl" style="stroke-width:1.07;opacity:.7" transform="translate(.8 .5)" d="M506.500 334C507 342 504 349 498.800 350.800C495 351.500 492 348.500 491 345C493.500 352 497.500 360 498.800 367.400L498.800 390M503 336C502.500 342 500.500 346 497.500 347.500"/><path class="bl" style="stroke-width:2.38" d="M513 331.700C516 340 518.500 350 519.300 357C519.500 370 518 380 516.700 390M510 336C513 348 514.500 366 513.500 390"/><path class="bl" style="stroke-width:1.07;opacity:.7" transform="translate(.8 .5)" d="M513 331.700C516 340 518.500 350 519.300 357C519.500 370 518 380 516.700 390M510 336C513 348 514.500 366 513.500 390"/><ellipse cx="462.300" cy="329.500" rx="5" ry="5.500" fill="#1f3f8c" opacity=".9"/><ellipse cx="505" cy="328.800" rx="5" ry="5.500" fill="#1f3f8c" opacity=".9"/><ellipse class="bl" cx="462.300" cy="329.500" rx="6" ry="6.300"/><ellipse class="bl" cx="505" cy="328.800" rx="6" ry="6.300"/><path class="og" style="stroke-width:1.71" d="M644 166.500L643.200 196M645.500 168L676 167M677.500 166L677.800 196.500L646 197.500M643 194L676 196.500M675.500 167L676.500 192"/><path class="og" style="stroke-width:1.71" d="M651.500 184.500C651 177 653 171.500 658 171.500C664 171.500 666 177 665.500 184L651.500 184.500M656 185.500L656 192.500M660.500 185.500L660.500 192.500"/><path class="og" style="stroke-width:1.90" d="M690.700 169.500L691.500 188M686 180.500L697 179L692 188.500L686 180.500"/><path class="og" style="stroke-width:1.71" d="M641.500 212L642.500 240M642 211.500L674 210.500M673 211L674.500 239.500M643 240.500L673 239M644 213L672 212.500M671 213L672 238"/><path class="og" style="stroke-width:1.71" d="M649 218.500L667 217.500M657 219L657 227M652 227L652 221M662 226.500L662 220.500M646 229L672 227.500M646 229L650.500 237.500L665 236.500L669 228"/><path class="og" style="stroke-width:1.71" d="M642.500 256L644.500 287M642 255.500L676 253.500M676.500 254L676.500 285M645 287.500L677 284.500M644 258L675 256"/><path class="og" style="stroke-width:1.71" d="M654 266.500L669 265L666 275L657 275.500L654 266.500M657 276L656 284L668 283L667 275M660 279L665 278.500"/><path class="og" style="stroke-width:1.71" d="M646.500 300L646 331M647 299.500L676.500 298M676.500 298.500L677 329M646.500 330L677 327.500M650 302L650.500 328M653 303L653.500 329"/><path class="og" style="stroke-width:1.52" d="M657 305L672 303.500L672.500 326M658 306L658.500 329M662 311L661 329M666 309L664 329M669 306L668.500 328M657 318L672 316.500"/><path class="og" style="stroke-width:1.52" d="M645.500 163.500L668 161.500"/><text x="621" y="149" transform="rotate(-11 621 149)" font-family="Liberation Serif,serif" font-style="italic" font-size="17" fill="#9a5a1c" textLength="41" lengthAdjust="spacingAndGlyphs">move</text><text x="644.500" y="163" transform="rotate(-9 644 163)" font-family="Liberation Serif,serif" font-style="italic" font-size="17" fill="#9a5a1c" textLength="43" lengthAdjust="spacingAndGlyphs">down</text></svg>
<div style="left:848.3px;top:192px;width:111.70000000000005px;height:28.5px;background:#484848;"></div>
<svg style="left:0px;top:0px;" width="960" height="230" viewBox="0 0 960 230"><rect x="850" y="195.5" width="42.500" height="8.500" fill="#2e2e2e" stroke="#5e5e5e" stroke-width=".6"/><rect x="850" y="208.5" width="42.500" height="8.500" fill="#2e2e2e" stroke="#5e5e5e" stroke-width=".6"/><path d="M861 203.500L892 196.500V203.500z" fill="#444"/><path d="M871.700 194.500v10.500" stroke="#8c8c8c" stroke-width="1.300"/><path d="M872 209L882 209L892 216.500H872z" fill="#444"/><path d="M871.700 207.500v10.500" stroke="#8c8c8c" stroke-width="1.300"/><circle class="ic" cx="901" cy="200" r="4.200" style="stroke:#c4c4c4"/><circle class="ic" cx="914" cy="200" r="4.200" style="stroke:#c4c4c4"/><circle class="ic" cx="926.7" cy="200" r="4.200" style="stroke:#c4c4c4"/><path class="ic" style="stroke:#c4c4c4" d="M899 200h4M912 200h4M914 198v4"/><rect x="924.900" y="198.200" width="3.600" height="3.600" rx=".6" fill="#d0d0d0"/><path d="M934.300 195v10.500M934.300 208v10.500" stroke="#5e5e5e" stroke-width="1"/><rect class="ic" style="stroke:#c4c4c4;stroke-width:.9" x="937.500" y="196.500" width="4" height="4"/><rect x="940.500" y="199.500" width="4" height="4" fill="#c4c4c4"/><rect class="ic" style="stroke:#c4c4c4;stroke-width:.9" x="950" y="196" width="8" height="8"/><path class="ic" style="stroke:#c4c4c4;stroke-width:.9" d="M952 202l4-4M954 198h2v2"/><path class="ic" style="stroke:#c4c4c4" d="M898 214.500a3.500 3.500 0 1 1 5.500 1.500M911.500 216a3.500 3.500 0 1 1 5.500-1.500"/><path d="M896.500 212l1.500 3l2-2zM918.500 212l-1.500 3l-2-2z" fill="#c4c4c4"/><circle class="ic" style="stroke:#c4c4c4" cx="926.700" cy="213" r="4"/><path class="ic" style="stroke:#c4c4c4" d="M926.700 209v2.500"/><circle cx="926.700" cy="213.500" r="1.100" fill="#c4c4c4"/><path d="M937 209.500v7l3.300-3.500zM945 209.500v7l-3.300-3.500z" fill="#c4c4c4" stroke="#c4c4c4" stroke-width=".6"/><path d="M941 208.500v9" stroke="#c4c4c4" stroke-width=".7"/><path d="M950.500 209h7l-3.500 3.300zM950.500 217h7l-3.500-3.300z" fill="#c4c4c4" stroke="#c4c4c4" stroke-width=".6"/><path d="M949.500 213h9" stroke="#c4c4c4" stroke-width=".7"/></svg>
<span class="t" style="left:851px;top:195.3px;font-size:7px;line-height:9px;color:#d0d0d0;transform:scaleX(0.86);">50.0</span>
<span class="t" style="left:851px;top:208.3px;font-size:7px;line-height:9px;color:#d0d0d0;transform:scaleX(0.86);">0.0</span>
<div style="left:848.3px;top:220.7px;width:111.70000000000005px;height:10.5px;background:#343434;"></div>
<div style="left:848.3px;top:220.7px;width:11.2px;height:9.5px;background:#383838;"></div>
<div style="left:860px;top:220.7px;width:38.299999999999955px;height:11.5px;background:#484848;"></div>
<div style="left:899.3px;top:220.7px;width:17.700000000000045px;height:10.0px;background:#414141;"></div>
<div style="left:918px;top:220.7px;width:18px;height:10.0px;background:#414141;"></div>
<div style="left:848.3px;top:231.2px;width:111.70000000000005px;height:2px;background:#484848;"></div>
<svg style="left:848.3px;top:220.7px;" width="12" height="12" viewBox="0 0 12 12"><path d="M3 3.500h4M3 5.500h4M3 7.500h4" stroke="#626262" stroke-width="1" fill="none"/></svg>
<svg style="left:860px;top:220.7px;" width="80" height="12" viewBox="0 0 80 12"><path class="ic" d="M5 3.500h6a2 2 0 0 1 0 4h-5a2 2 0 0 0 0 4h6M6.500 2l-1.500 1.500l1.500 1.500"/><path class="icd" style="stroke:#7c7c7c" d="M45 9.500a3.500 3.500 0 0 1 7 0M44 7l1 2.500l2.500-.8M63 9.500a3.500 3.500 0 0 1 7 0M71 7l-1 2.500l-2.500-.8"/></svg>
<span class="t" style="left:877.5px;top:223.3px;font-size:7px;line-height:9px;color:#dcdcdc;transform:scaleX(0.88);">History</span>
<div style="left:848.3px;top:233.2px;width:111.70000000000005px;height:89px;background:#343434;"></div>
<div style="left:848.3px;top:234.2px;width:103.5px;height:12.2px;background:#66708f;"></div>
<div style="left:850.7px;top:235.2px;width:80px;height:11.2px;"><span class="t" style="left:0;top:0.800px;font-size:8px;line-height:10px;color:#e4e6ee;transform:scaleX(.84);transform-origin:0 50%;">Pen/Pen/Real G-Pen</span></div>
<div style="left:848.3px;top:247.2px;width:103.5px;height:12.2px;background:#3b3b3b;"></div>
<div style="left:850.7px;top:248.2px;width:80px;height:11.2px;"><span class="t" style="left:0;top:0.800px;font-size:8px;line-height:10px;color:#a6a6a6;transform:scaleX(.84);transform-origin:0 50%;">Pen/Pen/Real G-Pen</span></div>
<div style="left:848.3px;top:260.2px;width:103.5px;height:12.2px;background:#3b3b3b;"></div>
<div style="left:850.7px;top:261.2px;width:80px;height:11.2px;"><span class="t" style="left:0;top:0.800px;font-size:8px;line-height:10px;color:#a6a6a6;transform:scaleX(.84);transform-origin:0 50%;">Pen/Pen/Real G-Pen</span></div>
<div style="left:848.3px;top:273.2px;width:103.5px;height:12.2px;background:#3b3b3b;"></div>
<div style="left:850.7px;top:274.2px;width:80px;height:11.2px;"><span class="t" style="left:0;top:0.800px;font-size:8px;line-height:10px;color:#a6a6a6;transform:scaleX(.84);transform-origin:0 50%;">Pen/Pen/Real G-Pen</span></div>
<div style="left:848.3px;top:286.2px;width:103.5px;height:12.2px;background:#3b3b3b;"></div>
<div style="left:850.7px;top:287.2px;width:80px;height:11.2px;"><span class="t" style="left:0;top:0.800px;font-size:8px;line-height:10px;color:#a6a6a6;transform:scaleX(.84);transform-origin:0 50%;">Pen/Pen/Real G-Pen</span></div>
<div style="left:848.3px;top:299.2px;width:103.5px;height:12.2px;background:#3b3b3b;"></div>
<div style="left:850.7px;top:300.2px;width:80px;height:11.2px;"><span class="t" style="left:0;top:0.800px;font-size:8px;line-height:10px;color:#a6a6a6;transform:scaleX(.84);transform-origin:0 50%;">Pen/Pen/Real G-Pen</span></div>
<div style="left:848.3px;top:312.2px;width:103.5px;height:10px;background:#3b3b3b;"></div>
<div style="left:850.7px;top:313.2px;width:80px;height:9px;"><span class="t" style="left:0;top:0.800px;font-size:8px;line-height:10px;color:#a6a6a6;transform:scaleX(.84);transform-origin:0 50%;">Pen/Pen/Real G-Pen</span></div>
<div style="left:952px;top:233.8px;width:8px;height:88.5px;background:#444;"></div>
<svg style="left:952px;top:233.8px;" width="8" height="89" viewBox="0 0 8 89"><rect x="0" y="0" width="8" height="7.500" fill="#565656"/><rect x="0" y="80" width="8" height="8.500" fill="#565656"/><circle cx="4" cy="76.300" r="3" fill="#5e5e5e"/><path class="ic" style="stroke:#a8a8a8;stroke-width:.9" d="M2.500 4.800l1.500-1.500l1.500 1.500M2.500 83.500l1.500 1.500l1.500-1.500"/></svg>
<div style="left:848.3px;top:323.8px;width:111.70000000000005px;height:10.2px;background:#343434;"></div>
<div style="left:848.3px;top:323.8px;width:11.2px;height:9.2px;background:#383838;"></div>
<div style="left:860px;top:323.8px;width:32.60000000000002px;height:11.2px;background:#484848;"></div>
<div style="left:894px;top:323.8px;width:18px;height:9.7px;background:#414141;"></div>
<div style="left:913px;top:323.8px;width:18px;height:9.7px;background:#414141;"></div>
<div style="left:848.3px;top:334.0px;width:111.70000000000005px;height:2px;background:#484848;"></div>
<svg style="left:848.3px;top:323.8px;" width="12" height="12" viewBox="0 0 12 12"><path d="M3 3.500h4M3 5.500h4M3 7.500h4" stroke="#626262" stroke-width="1" fill="none"/></svg>
<svg style="left:860px;top:323.8px;" width="80" height="12" viewBox="0 0 80 12"><path class="ic" style="stroke-width:.9" d="M10 2l5 2.300l-5 2.300l-5-2.300zM5 6.300l5 2.300l5-2.300M5 8.300l5 2.300l5-2.300"/><path class="icd" style="stroke:#7c7c7c" d="M39 5h8v5.500h-8zM39 5l8-2M42 8.500l2 1.500l2-1.500"/><rect class="icd" style="stroke:#7c7c7c" x="58" y="3.500" width="8" height="7"/><rect x="60" y="7" width="3" height="2.500" fill="#7c7c7c"/></svg>
<span class="t" style="left:877.8px;top:326.2px;font-size:7px;line-height:9px;color:#dcdcdc;transform:scaleX(0.8);">Layer</span>
<div style="left:848.3px;top:336px;width:111.70000000000005px;height:42.5px;background:#484848;"></div>
<svg style="left:0px;top:0px;" width="960" height="380" viewBox="0 0 960 380"><rect x="848.800" y="337" width="24" height="13" fill="#5a5a5a" stroke="#6c6c6c" stroke-width=".7"/><rect x="851.500" y="339.500" width="9" height="8" rx="1.200" fill="#6a6a6a" stroke="#a8a8a8" stroke-width="1"/><path class="ic" style="stroke:#d0d0d0" d="M866 342.500l2.300 2.300l2.300-2.300"/><rect x="875.300" y="337" width="28.500" height="13" fill="#505050"/><path class="ic" style="stroke:#bcbcbc" d="M897 342.500l2.300 2.300l2.300-2.300"/><rect x="908" y="340.800" width="29" height="4.600" fill="none" stroke="#6e6e6e" stroke-width=".8"/><rect class="ic" style="stroke:#b0b0b0;stroke-width:.8" x="858.500" y="353" width="6" height="6" stroke-dasharray="1 .8"/><rect x="860.500" y="355" width="5.500" height="5.500" fill="#8e8e8e" stroke="#c4c4c4" stroke-width=".7"/><path d="M873.500 360.500h4l-.5-4.500h-3z" fill="#d0d0d0"/><path class="ic" style="stroke-width:.8" d="M871 353l4 1.500l4-1.500M871 356l4-1.500l4 1.500M875.300 352.500v3.500"/><path class="ic" style="stroke-width:.9" d="M885 352.500h3.500v6l-1.500 1.500h-2z"/><path d="M885 352.500h3.500v3h-3.500z" fill="#d0d0d0"/><path class="ic" style="stroke-width:.9" d="M888.500 359.500c1-1.500 2-1.500 3 0"/><rect x="897.500" y="356" width="6" height="4.800" rx=".6" fill="#d0d0d0"/><path class="ic" d="M898.700 356v-1.500a1.800 1.800 0 0 1 3.600 0v1.500"/><rect x="909.500" y="357" width="4" height="3.800" fill="#d0d0d0"/><path class="ic" style="stroke-width:.8" d="M910.300 357v-1a1.200 1.200 0 0 1 2.400 0v1"/><path d="M912 352.500h2v2h-2zM914 354.500h2v2h-2zM916 352.500h2v2h-2zM916 356.500h2v2h-2zM914 358.500h2v2h-2z" fill="#d0d0d0"/><rect x="919.300" y="351.500" width="18.500" height="11" fill="#525252"/><rect x="922" y="354" width="6" height="5.500" fill="#6e6e6e" stroke="#7e7e7e" stroke-width=".8"/><circle cx="925.500" cy="357.500" r="2.200" fill="#525252" stroke="#7e7e7e" stroke-width=".7"/><path class="icd" style="stroke:#8a8a8a;stroke-width:.8" d="M927.500 359l2.500 2.500M930 359l-2.500 2.500M931.500 355.500l1.700 1.700l1.700-1.700"/><rect x="940" y="351.500" width="20" height="11" fill="#525252"/><path d="M943 359.500l6-6v6z" fill="#6e6e6e" stroke="#7e7e7e" stroke-width=".7"/><path class="icd" style="stroke:#8a8a8a;stroke-width:.8" d="M948.500 359l2.500 2.500M951 359l-2.500 2.500M953 355.500l1.700 1.700l1.700-1.700"/><path d="M862.2 366h6.500a1 1 0 0 1 1 1v5.500l-2.500 2.500h-5a1 1 0 0 1-1-1v-7a1 1 0 0 1 1-1z" fill="none" stroke="#d0d0d0" stroke-width="1"/><circle cx="869.7" cy="374.3" r="1.900" fill="#484848" stroke="#d0d0d0" stroke-width=".7"/><path d="M874.8 366h6.500a1 1 0 0 1 1 1v5.500l-2.500 2.500h-5a1 1 0 0 1-1-1v-7a1 1 0 0 1 1-1z" fill="none" stroke="#d0d0d0" stroke-width="1"/><circle cx="882.3" cy="374.3" r="1.900" fill="#484848" stroke="#d0d0d0" stroke-width=".7"/><circle class="ic" style="stroke-width:.7" cx="878.500" cy="370.300" r="2"/><path d="M886.500 375v-8.500h3l1 1.300h4.500v7.200z" fill="#d0d0d0"/><circle cx="895" cy="374.500" r="1.900" fill="#484848" stroke="#d0d0d0" stroke-width=".7"/><rect class="icd" x="899.500" y="369.500" width="5.500" height="5.500" rx="1"/><rect class="icd" x="902.500" y="366.500" width="5.500" height="5.500" rx="1"/><rect class="icd" x="912" y="369.500" width="5.500" height="5.500" rx="1"/><rect class="icd" x="915" y="366.500" width="5.500" height="5.500" rx="1"/><rect x="924" y="366" width="9.300" height="9" rx="1.500" fill="#e4e4e4"/><circle cx="928.600" cy="370.500" r="2.600" fill="#484848"/><rect class="icd" x="936.500" y="368" width="6" height="6" rx="1"/><rect x="940" y="369.500" width="6" height="5.500" rx="1" fill="#6a6a6a" stroke="#7a7a7a" stroke-width=".8"/><path d="M950.500 368h6.500l-.6 7.500h-5.300z" fill="#c8c8c8"/><path class="ic" style="stroke:#c8c8c8" d="M949.800 367.500h8M952.500 367.500v-1.300h2.500v1.300"/><path d="M952.500 369.500v4.500M955 369.500v4.500" stroke="#484848" stroke-width=".7"/></svg>
<span class="t" style="left:877.3px;top:339.5px;font-size:7px;line-height:9px;color:#8c8c8c;transform:scaleX(0.74);">Normal</span>
<div style="left:848.3px;top:378.3px;width:111.70000000000005px;height:162px;background:#4c4c4c;"></div>
<div style="left:848.3px;top:378.7px;width:11.5px;height:18.1px;background:#3e3e3e;"></div>
<div style="left:860.7px;top:378.7px;width:11.3px;height:18.1px;background:#3e3e3e;"></div>
<div style="left:873px;top:378.7px;width:79px;height:18.1px;background:#3e3e3e;"></div>
<div style="left:873px;top:378.7px;width:23.7px;height:18.1px;background:#5b6788;"></div>
<div style="left:848.3px;top:397.8px;width:11.5px;height:18.1px;background:#3e3e3e;"></div>
<div style="left:860.7px;top:397.8px;width:11.3px;height:18.1px;background:#3e3e3e;"></div>
<div style="left:873px;top:397.8px;width:79px;height:18.1px;background:#3e3e3e;"></div>
<div style="left:848.3px;top:416.9px;width:11.5px;height:18.1px;background:#3e3e3e;"></div>
<div style="left:860.7px;top:416.9px;width:11.3px;height:18.1px;background:#3e3e3e;"></div>
<div style="left:873px;top:416.9px;width:79px;height:18.1px;background:#3e3e3e;"></div>
<div style="left:848.3px;top:436.0px;width:11.5px;height:18.1px;background:#3e3e3e;"></div>
<div style="left:860.7px;top:436.0px;width:11.3px;height:18.1px;background:#3e3e3e;"></div>
<div style="left:873px;top:436.0px;width:79px;height:18.1px;background:#3e3e3e;"></div>
<div style="left:848.3px;top:455.1px;width:11.5px;height:18.1px;background:#3e3e3e;"></div>
<div style="left:860.7px;top:455.1px;width:11.3px;height:18.1px;background:#3e3e3e;"></div>
<div style="left:873px;top:455.1px;width:79px;height:18.1px;background:#3e3e3e;"></div>
<div style="left:873px;top:454.1px;width:8.3px;height:1.2px;background:#3e3e3e;"></div>
<div style="left:848.3px;top:474.2px;width:11.5px;height:18.1px;background:#3e3e3e;"></div>
<div style="left:860.7px;top:474.2px;width:11.3px;height:18.1px;background:#3e3e3e;"></div>
<div style="left:873px;top:474.2px;width:79px;height:18.1px;background:#3e3e3e;"></div>
<div style="left:873px;top:473.2px;width:8.3px;height:1.2px;background:#3e3e3e;"></div>
<div style="left:848.3px;top:493.3px;width:11.5px;height:18.1px;background:#3e3e3e;"></div>
<div style="left:860.7px;top:493.3px;width:11.3px;height:18.1px;background:#3e3e3e;"></div>
<div style="left:873px;top:493.3px;width:79px;height:18.1px;background:#3e3e3e;"></div>
<div style="left:873px;top:492.3px;width:8.3px;height:1.2px;background:#3e3e3e;"></div>
<div style="left:848.3px;top:512.4px;width:11.5px;height:18.1px;background:#3e3e3e;"></div>
<div style="left:860.7px;top:512.4px;width:11.3px;height:18.1px;background:#3e3e3e;"></div>
<div style="left:873px;top:512.4px;width:79px;height:18.1px;background:#3e3e3e;"></div>
<div style="left:873px;top:511.4px;width:8.3px;height:1.2px;background:#3e3e3e;"></div>
<div style="left:848.3px;top:531.5px;width:11.5px;height:8.5px;background:#3e3e3e;"></div>
<div style="left:860.7px;top:531.5px;width:11.3px;height:8.5px;background:#3e3e3e;"></div>
<div style="left:873px;top:531.5px;width:79px;height:8.5px;background:#3e3e3e;"></div>
<div style="left:873px;top:530.5px;width:8.3px;height:1.2px;background:#3e3e3e;"></div>
<svg style="left:0px;top:0px;" width="960" height="540" viewBox="0 0 960 540"><path d="M849.600 387.7c2-3.400 7-3.400 9 0c-2 3.400-7 3.400-9 0z" fill="none" stroke="#555555" stroke-width="1"/><circle cx="854.100" cy="387.7" r="1.800" fill="#555555"/><path class="icd" style="stroke:#6e6e6e" d="M862.500 391.2l6-7M862 391.7h7.500"/><path class="ic" style="stroke:#e0e0e0;stroke-width:1.100" d="M876.800 385.0l2.700 2.700l-2.700 2.700"/><rect x="884" y="384.7" width="8" height="7.500" rx="1" fill="none" stroke="#c8c8c8" stroke-width="1"/><rect x="885.800" y="383.2" width="8" height="7.500" rx="1" fill="#8a8a8a" stroke="#d0d0d0" stroke-width="1"/><path d="M887 382.9v1.300M889 382.9v1.300M891 382.9v1.300M893 382.9v1.300" stroke="#d0d0d0" stroke-width=".7"/><path d="M849.600 406.8c2-3.400 7-3.400 9 0c-2 3.400-7 3.400-9 0z" fill="none" stroke="#ececec" stroke-width="1"/><circle cx="854.100" cy="406.8" r="1.800" fill="#ececec"/><rect x="863.500" y="404.0" width="6" height="6" rx=".8" fill="#3a3a3a" stroke="#4e4e4e" stroke-width=".8"/><path class="ic" style="stroke:#e0e0e0;stroke-width:1.100" d="M876.800 404.1l2.700 2.700l-2.700 2.700"/><rect x="884" y="403.8" width="8" height="7.500" rx="1" fill="none" stroke="#c8c8c8" stroke-width="1"/><rect x="885.800" y="402.3" width="8" height="7.500" rx="1" fill="#8a8a8a" stroke="#d0d0d0" stroke-width="1"/><path d="M887 402.0v1.300M889 402.0v1.300M891 402.0v1.300M893 402.0v1.300" stroke="#d0d0d0" stroke-width=".7"/><path d="M849.600 425.9c2-3.400 7-3.400 9 0c-2 3.400-7 3.400-9 0z" fill="none" stroke="#ececec" stroke-width="1"/><circle cx="854.100" cy="425.9" r="1.800" fill="#ececec"/><rect x="863.500" y="423.09999999999997" width="6" height="6" rx=".8" fill="#3a3a3a" stroke="#4e4e4e" stroke-width=".8"/><path class="ic" style="stroke:#e0e0e0;stroke-width:1.100" d="M876.800 423.2l2.700 2.700l-2.700 2.700"/><rect x="884" y="422.9" width="8" height="7.500" rx="1" fill="none" stroke="#c8c8c8" stroke-width="1"/><rect x="885.800" y="421.4" width="8" height="7.500" rx="1" fill="#8a8a8a" stroke="#d0d0d0" stroke-width="1"/><path d="M887 421.09999999999997v1.300M889 421.09999999999997v1.300M891 421.09999999999997v1.300M893 421.09999999999997v1.300" stroke="#d0d0d0" stroke-width=".7"/><path d="M849.600 445.0c2-3.400 7-3.400 9 0c-2 3.400-7 3.400-9 0z" fill="none" stroke="#ececec" stroke-width="1"/><circle cx="854.100" cy="445.0" r="1.800" fill="#ececec"/><rect x="863.500" y="442.2" width="6" height="6" rx=".8" fill="#3a3a3a" stroke="#4e4e4e" stroke-width=".8"/><path class="ic" style="stroke:#e0e0e0;stroke-width:1.100" d="M874.500 444.5l2.700 2.700l2.700-2.700"/><rect x="884.500" y="443.5" width="9" height="5.500" rx="1" fill="none" stroke="#d0d0d0" stroke-width="1"/><rect x="886.500" y="440.5" width="9" height="6" rx="1" fill="#dcdcdc" stroke="#d0d0d0" stroke-width="1"/><path d="M884.500 446.0h9" stroke="#d0d0d0" stroke-width=".9"/><path d="M849.600 464.1c2-3.400 7-3.400 9 0c-2 3.400-7 3.400-9 0z" fill="none" stroke="#555555" stroke-width="1"/><circle cx="854.100" cy="464.1" r="1.800" fill="#555555"/><rect x="863.500" y="461.3" width="6" height="6" rx=".8" fill="#3a3a3a" stroke="#4e4e4e" stroke-width=".8"/><rect x="887.200" y="459.40000000000003" width="16.600" height="10.5" rx="1" fill="#f4f4f4" stroke="#2e2e2e" stroke-width="1"/><rect x="888.5" y="460.40000000000003" width="3" height="3" fill="#d4dcdc"/><rect x="888.5" y="466.40000000000003" width="3" height="3" fill="#d4dcdc"/><rect x="891.5" y="463.40000000000003" width="3" height="3" fill="#d4dcdc"/><rect x="894.5" y="460.40000000000003" width="3" height="3" fill="#d4dcdc"/><rect x="894.5" y="466.40000000000003" width="3" height="3" fill="#d4dcdc"/><rect x="897.5" y="463.40000000000003" width="3" height="3" fill="#d4dcdc"/><rect x="900.5" y="460.40000000000003" width="3" height="3" fill="#d4dcdc"/><rect x="900.5" y="466.40000000000003" width="3" height="3" fill="#d4dcdc"/><path d="M849.600 483.2c2-3.400 7-3.400 9 0c-2 3.400-7 3.400-9 0z" fill="none" stroke="#555555" stroke-width="1"/><circle cx="854.100" cy="483.2" r="1.800" fill="#555555"/><rect x="863.500" y="480.4" width="6" height="6" rx=".8" fill="#3a3a3a" stroke="#4e4e4e" stroke-width=".8"/><rect x="887.200" y="478.5" width="16.600" height="10.5" rx="1" fill="#f4f4f4" stroke="#2e2e2e" stroke-width="1"/><rect x="888.5" y="479.5" width="3" height="3" fill="#d4dcdc"/><rect x="888.5" y="485.5" width="3" height="3" fill="#d4dcdc"/><rect x="891.5" y="482.5" width="3" height="3" fill="#d4dcdc"/><rect x="894.5" y="479.5" width="3" height="3" fill="#d4dcdc"/><rect x="894.5" y="485.5" width="3" height="3" fill="#d4dcdc"/><rect x="897.5" y="482.5" width="3" height="3" fill="#d4dcdc"/><rect x="900.5" y="479.5" width="3" height="3" fill="#d4dcdc"/><rect x="900.5" y="485.5" width="3" height="3" fill="#d4dcdc"/><path d="M849.600 502.3c2-3.400 7-3.400 9 0c-2 3.400-7 3.400-9 0z" fill="none" stroke="#555555" stroke-width="1"/><circle cx="854.100" cy="502.3" r="1.800" fill="#555555"/><rect x="863.500" y="499.5" width="6" height="6" rx=".8" fill="#3a3a3a" stroke="#4e4e4e" stroke-width=".8"/><rect x="887.200" y="497.6" width="16.600" height="10.5" rx="1" fill="#0c4a44" stroke="#2e2e2e" stroke-width="1"/><path d="M849.600 521.4c2-3.400 7-3.400 9 0c-2 3.400-7 3.400-9 0z" fill="none" stroke="#555555" stroke-width="1"/><circle cx="854.100" cy="521.4" r="1.800" fill="#555555"/><rect x="863.500" y="518.6" width="6" height="6" rx=".8" fill="#3a3a3a" stroke="#4e4e4e" stroke-width=".8"/><rect x="887.200" y="516.6999999999999" width="16.600" height="10.5" rx="1" fill="#9ccfc8" stroke="#2e2e2e" stroke-width="1"/><path d="M888 521.9h15" stroke="#84b8b0" stroke-width=".6"/><path d="M849.600 540.5c2-3.400 7-3.400 9 0c-2 3.400-7 3.400-9 0z" fill="none" stroke="#555555" stroke-width="1"/><circle cx="854.100" cy="540.5" r="1.800" fill="#555555"/><rect x="863.500" y="537.7" width="6" height="6" rx=".8" fill="#3a3a3a" stroke="#4e4e4e" stroke-width=".8"/><rect x="887.200" y="535.8" width="16.600" height="4.2000000000000455" rx="1" fill="#f4f4f4" stroke="#2e2e2e" stroke-width="1"/><rect x="888" y="538.0" width="15" height="3" fill="#a8d4d0"/></svg>
<div style="left:901.2px;top:380.2px;width:50.799999999999955px;height:9px;"><span class="t" style="left:0;top:0;font-size:7.500px;line-height:9.500px;color:#e2e2e2;transform:scaleX(.850);transform-origin:0 50%;">100 % Normal</span></div>
<div style="left:901.2px;top:387.7px;width:50.799999999999955px;height:9.5px;"><span class="t" style="left:0;top:0;font-size:7.500px;line-height:9.500px;color:#e2e2e2;transform:scaleX(0.7);transform-origin:0 50%;">Personajes rough : 2</span></div>
<div style="left:901.2px;top:399.3px;width:50.799999999999955px;height:9px;"><span class="t" style="left:0;top:0;font-size:7.500px;line-height:9.500px;color:#e2e2e2;transform:scaleX(.850);transform-origin:0 50%;">100 % Normal</span></div>
<div style="left:901.2px;top:406.8px;width:50.799999999999955px;height:9.5px;"><span class="t" style="left:0;top:0;font-size:7.500px;line-height:9.500px;color:#e2e2e2;transform:scaleX(0.88);transform-origin:0 50%;">Props : 139</span></div>
<div style="left:901.2px;top:418.4px;width:50.799999999999955px;height:9px;"><span class="t" style="left:0;top:0;font-size:7.500px;line-height:9.500px;color:#e2e2e2;transform:scaleX(.850);transform-origin:0 50%;">100 % Normal</span></div>
<div style="left:901.2px;top:425.9px;width:50.799999999999955px;height:9.5px;"><span class="t" style="left:0;top:0;font-size:7.500px;line-height:9.500px;color:#e2e2e2;transform:scaleX(0.86);transform-origin:0 50%;">Esqueletos &nbsp;: 391</span></div>
<div style="left:901.2px;top:437.5px;width:50.799999999999955px;height:9px;"><span class="t" style="left:0;top:0;font-size:7.500px;line-height:9.500px;color:#e2e2e2;transform:scaleX(.850);transform-origin:0 50%;">100 % Normal</span></div>
<div style="left:901.2px;top:445.0px;width:50.799999999999955px;height:9.5px;"><span class="t" style="left:0;top:0;font-size:7.500px;line-height:9.500px;color:#e2e2e2;transform:scaleX(0.74);transform-origin:0 50%;">Backgrounds &nbsp;: 196</span></div>
<div style="left:909.2px;top:456.6px;width:42.799999999999955px;height:9px;"><span class="t" style="left:0;top:0;font-size:7.500px;line-height:9.500px;color:#e2e2e2;transform:scaleX(.850);transform-origin:0 50%;">100 % Normal</span></div>
<div style="left:909.2px;top:464.1px;width:42.799999999999955px;height:9.5px;"><span class="t" style="left:0;top:0;font-size:7.500px;line-height:9.500px;color:#e2e2e2;transform:scaleX(0.9);transform-origin:0 50%;">8</span></div>
<div style="left:909.2px;top:475.7px;width:42.799999999999955px;height:9px;"><span class="t" style="left:0;top:0;font-size:7.500px;line-height:9.500px;color:#e2e2e2;transform:scaleX(.850);transform-origin:0 50%;">100 % Normal</span></div>
<div style="left:909.2px;top:483.2px;width:42.799999999999955px;height:9.5px;"><span class="t" style="left:0;top:0;font-size:7.500px;line-height:9.500px;color:#e2e2e2;transform:scaleX(0.9);transform-origin:0 50%;">7a</span></div>
<div style="left:909.2px;top:494.8px;width:42.799999999999955px;height:9px;"><span class="t" style="left:0;top:0;font-size:7.500px;line-height:9.500px;color:#e2e2e2;transform:scaleX(.850);transform-origin:0 50%;">100 % Normal</span></div>
<div style="left:909.2px;top:502.3px;width:42.799999999999955px;height:9.5px;"><span class="t" style="left:0;top:0;font-size:7.500px;line-height:9.500px;color:#e2e2e2;transform:scaleX(0.88);transform-origin:0 50%;">Layer 18</span></div>
<div style="left:909.2px;top:513.9px;width:42.799999999999955px;height:9px;"><span class="t" style="left:0;top:0;font-size:7.500px;line-height:9.500px;color:#e2e2e2;transform:scaleX(.850);transform-origin:0 50%;">100 % Normal</span></div>
<div style="left:909.2px;top:521.4px;width:42.799999999999955px;height:9.5px;"><span class="t" style="left:0;top:0;font-size:7.500px;line-height:9.500px;color:#e2e2e2;transform:scaleX(0.88);transform-origin:0 50%;">Layer 17</span></div>
<div style="left:909.2px;top:533.0px;width:42.799999999999955px;height:7.0px;"><span class="t" style="left:0;top:0;font-size:7.500px;line-height:9.500px;color:#e2e2e2;transform:scaleX(.850);transform-origin:0 50%;">100 % Normal</span></div>
<div style="left:952px;top:378.3px;width:8px;height:162px;background:#444;"></div>
<svg style="left:952px;top:378.3px;" width="8" height="162" viewBox="0 0 8 162"><rect x="0" y="0" width="8" height="7.500" fill="#565656"/><rect x="0" y="152.500" width="8" height="9.500" fill="#565656"/><circle cx="4" cy="12" r="3" fill="#5e5e5e"/><path class="ic" style="stroke:#a8a8a8;stroke-width:.9" d="M2.500 4.800l1.500-1.500l1.500 1.500M2.500 156l1.500 1.500l1.500-1.500"/></svg>
<div style="left:838px;top:45px;width:10.3px;height:495px;background:#343434;"></div>
</body></html>
